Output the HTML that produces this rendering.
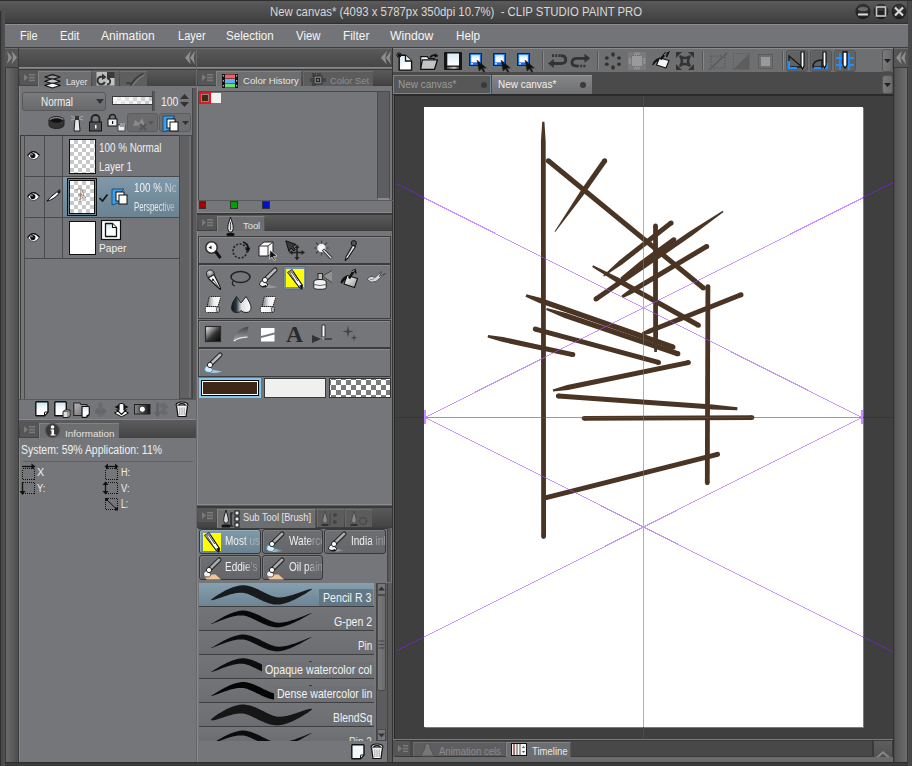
<!DOCTYPE html>
<html><head><meta charset="utf-8"><style>
*{margin:0;padding:0;box-sizing:border-box}
html,body{width:912px;height:766px;overflow:hidden;background:#353535;font-family:"Liberation Sans",sans-serif;position:relative}
.a{position:absolute}
.t{white-space:nowrap;line-height:1;transform-origin:0 0}
svg{position:absolute;overflow:visible}
.tx{overflow:visible}
</style></head><body>
<div class="a" style="left:0px;top:0px;width:912px;height:24px;background:linear-gradient(#5a5a5a,#3e3e3e);border-top:1px solid #2e2e2e;border-bottom:1px solid #2e2e2e"></div>
<svg class="tx" style="left:264.60px;top:2.20px" width="392.2" height="19.1"><text x="5" y="14.30" font-family="Liberation Sans" font-weight="normal" font-size="11.92" fill="#d8d8d8" textLength="372.18" lengthAdjust="spacingAndGlyphs" style="white-space:pre;">New canvas* (4093 x 5787px 350dpi 10.7%) &nbsp;- CLIP STUDIO PAINT PRO</text></svg>
<svg style="left:854.5px;top:3px;" width="16" height="17" viewBox="0 0 16 17"><defs><radialGradient id="wg" cx="50%" cy="30%" r="70%"><stop offset="0" stop-color="#3c3c3c"/><stop offset="1" stop-color="#1a1a1a"/></radialGradient></defs><ellipse cx="8" cy="8.5" rx="7.5" ry="7.8" fill="url(#wg)"/><ellipse cx="8" cy="6" rx="5" ry="2" fill="#6a6a6a"/><rect x="3" y="10.5" width="10" height="2" fill="#e0e0e0"/></svg>
<svg style="left:872.5px;top:3px;" width="16" height="17" viewBox="0 0 16 17"><defs><radialGradient id="wg" cx="50%" cy="30%" r="70%"><stop offset="0" stop-color="#3c3c3c"/><stop offset="1" stop-color="#1a1a1a"/></radialGradient></defs><ellipse cx="8" cy="8.5" rx="7.5" ry="7.8" fill="url(#wg)"/><rect x="3.5" y="4" width="9" height="9" fill="none" stroke="#c8c8c8" stroke-width="1.6"/><rect x="5" y="8" width="6" height="3" fill="#222"/></svg>
<svg style="left:890.5px;top:3px;" width="16" height="17" viewBox="0 0 16 17"><defs><radialGradient id="wg" cx="50%" cy="30%" r="70%"><stop offset="0" stop-color="#3c3c3c"/><stop offset="1" stop-color="#1a1a1a"/></radialGradient></defs><ellipse cx="8" cy="8.5" rx="7.5" ry="7.8" fill="url(#wg)"/><path d="M4 4.5L12 12.5M12 4.5L4 12.5" stroke="#d8d8d8" stroke-width="2.2"/></svg>
<div class="a" style="left:0px;top:11px;width:5px;height:755px;background:linear-gradient(90deg,#303030 0,#303030 1px,#474747 1px,#525252 5px)"></div>
<div class="a" style="left:907px;top:1px;width:5px;height:765px;background:linear-gradient(90deg,#3a3a3a 0,#3a3a3a 1px,#4a4a4a 1px,#464646 5px)"></div>
<div class="a" style="left:5px;top:762px;width:902px;height:4px;background:#3a3a3a;border-top:1px solid #2e2e2e"></div>
<div class="a" style="left:5px;top:24px;width:903px;height:24px;background:#737477;border-top:1px solid #8e8e90;border-bottom:1px solid #3e3e40"></div>
<svg class="tx" style="left:14.60px;top:24.30px" width="37.6" height="20.9"><text x="5" y="15.70" font-family="Liberation Sans" font-weight="normal" font-size="13.08" fill="#f4f4f4" textLength="17.62" lengthAdjust="spacingAndGlyphs" style="white-space:pre;">File</text></svg>
<svg class="tx" style="left:54.60px;top:24.30px" width="39.3" height="20.9"><text x="5" y="15.70" font-family="Liberation Sans" font-weight="normal" font-size="13.08" fill="#f4f4f4" textLength="19.28" lengthAdjust="spacingAndGlyphs" style="white-space:pre;">Edit</text></svg>
<svg class="tx" style="left:95.70px;top:24.30px" width="73.7" height="20.9"><text x="5" y="15.70" font-family="Liberation Sans" font-weight="normal" font-size="13.08" fill="#f4f4f4" textLength="53.72" lengthAdjust="spacingAndGlyphs" style="white-space:pre;">Animation</text></svg>
<svg class="tx" style="left:172.70px;top:24.30px" width="47.6" height="20.9"><text x="5" y="15.70" font-family="Liberation Sans" font-weight="normal" font-size="13.08" fill="#f4f4f4" textLength="27.62" lengthAdjust="spacingAndGlyphs" style="white-space:pre;">Layer</text></svg>
<svg class="tx" style="left:221.00px;top:24.30px" width="67.6" height="20.9"><text x="5" y="15.70" font-family="Liberation Sans" font-weight="normal" font-size="13.08" fill="#f4f4f4" textLength="47.59" lengthAdjust="spacingAndGlyphs" style="white-space:pre;">Selection</text></svg>
<svg class="tx" style="left:291.00px;top:24.30px" width="44.5" height="20.9"><text x="5" y="15.70" font-family="Liberation Sans" font-weight="normal" font-size="13.08" fill="#f4f4f4" textLength="24.49" lengthAdjust="spacingAndGlyphs" style="white-space:pre;">View</text></svg>
<svg class="tx" style="left:338.10px;top:24.30px" width="46.3" height="20.9"><text x="5" y="15.70" font-family="Liberation Sans" font-weight="normal" font-size="13.08" fill="#f4f4f4" textLength="26.33" lengthAdjust="spacingAndGlyphs" style="white-space:pre;">Filter</text></svg>
<svg class="tx" style="left:385.30px;top:24.30px" width="63.4" height="20.9"><text x="5" y="15.70" font-family="Liberation Sans" font-weight="normal" font-size="13.08" fill="#f4f4f4" textLength="43.36" lengthAdjust="spacingAndGlyphs" style="white-space:pre;">Window</text></svg>
<svg class="tx" style="left:450.60px;top:24.30px" width="44.1" height="20.9"><text x="5" y="15.70" font-family="Liberation Sans" font-weight="normal" font-size="13.08" fill="#f4f4f4" textLength="24.12" lengthAdjust="spacingAndGlyphs" style="white-space:pre;">Help</text></svg>
<div class="a" style="left:5px;top:48px;width:13px;height:714px;background:linear-gradient(90deg,#6a6a6a 0,#5c5c5c 50%,#4e4e4e 100%);border-left:1px solid #3a3a3a"></div>
<div class="a" style="left:5px;top:48px;width:13px;height:20px;background:#555556;border-top:1px solid #6e6e6e;border-bottom:1px solid #3a3a3a"></div>
<svg style="left:7px;top:51px;" width="11" height="14" viewBox="0 0 11 14"><path d="M0 0L5 6.5L0 13L1.4 6.5Z M4.7 0L10 6.5L4.7 13L6 6.5Z" fill="#8e8e8e"/></svg>
<div class="a" style="left:18px;top:48px;width:179px;height:714px;background:#75767a"></div>
<div class="a" style="left:197px;top:48px;width:196px;height:714px;background:#75767a"></div>
<div class="a" style="left:18px;top:48px;width:1px;height:714px;background:#3a3a3a"></div>
<div class="a" style="left:19px;top:69px;width:1px;height:693px;background:#88898c"></div>
<div class="a" style="left:196px;top:48px;width:1px;height:714px;background:#66676a"></div>
<div class="a" style="left:197px;top:48px;width:1px;height:714px;background:#88898c"></div>
<div class="a" style="left:392px;top:48px;width:1px;height:714px;background:#333"></div>
<div class="a" style="left:19px;top:48px;width:177px;height:19px;background:linear-gradient(#5a5a5b,#464647);border-top:1px solid #6c6c6c"></div>
<div class="a" style="left:19px;top:67px;width:177px;height:2px;background:#7a7a7c;border-top:1px solid #8a8a8c"></div>
<svg style="left:185px;top:51px;" width="11" height="14" viewBox="0 0 11 14"><path d="M10 0L5 6.8L10 13.6L8.7 6.8Z M5.7 0L0 6.8L5.7 13.6L4.4 6.8Z" fill="#8e8e8e"/></svg>
<div class="a" style="left:197px;top:48px;width:195px;height:19px;background:linear-gradient(#5a5a5b,#464647);border-top:1px solid #6c6c6c"></div>
<div class="a" style="left:197px;top:67px;width:195px;height:2px;background:#7a7a7c;border-top:1px solid #8a8a8c"></div>
<svg style="left:381px;top:51px;" width="11" height="14" viewBox="0 0 11 14"><path d="M10 0L5 6.8L10 13.6L8.7 6.8Z M5.7 0L0 6.8L5.7 13.6L4.4 6.8Z" fill="#8e8e8e"/></svg>
<div class="a" style="left:19px;top:69px;width:177px;height:17px;background:linear-gradient(#5a5a5b,#434344);border-top:1px solid #3a3a3a"></div>
<div class="a" style="left:20px;top:70px;width:18px;height:15px;background:#565657"><svg width="18" height="15" style="left:0;top:0"><path d="M4 4L8 7.5L4 11Z" fill="#7a7a7a"/><rect x="9" y="4" width="6" height="1.6" fill="#7a7a7a"/><rect x="9" y="6.8" width="6" height="1.6" fill="#7a7a7a"/><rect x="9" y="9.6" width="6" height="1.6" fill="#7a7a7a"/></svg></div>
<div class="a" style="left:38px;top:71px;width:53px;height:15px;background:#6d6e70;border-top:1px solid #838385;border-left:1px solid #838385"></div>
<svg style="left:44px;top:74px;" width="17" height="15" viewBox="0 0 17 15"><g stroke="#111" stroke-width="1.1" stroke-linejoin="round"><path d="M0.8 3L8.5 0.6L16.2 3L8.5 5.6Z" fill="#9a9a9a"/><path d="M0.8 7.2L8.5 4.8L16.2 7.2L8.5 9.8Z" fill="#c8c8c8"/><path d="M0.8 11.4L8.5 9L16.2 11.4L8.5 14Z" fill="#fafafa"/></g></svg>
<svg class="tx" style="left:60.60px;top:72.59px" width="41.4" height="15.3"><text x="5" y="11.51" font-family="Liberation Sans" font-weight="normal" font-size="9.59" fill="#e4e4e4" textLength="21.41" lengthAdjust="spacingAndGlyphs" style="white-space:pre;">Layer</text></svg>
<div class="a" style="left:92px;top:71px;width:27px;height:15px;background:#5e5e5f;border-top:1px solid #707070"></div>
<svg style="left:96px;top:72px;" width="19" height="14" viewBox="0 0 19 14"><rect x="0.5" y="0" width="10.5" height="13.5" fill="#bdbdbd"/><rect x="11" y="0" width="7.5" height="6" fill="#3a3a3a"/><rect x="11" y="6" width="7.5" height="7.5" fill="#c4c4c4"/><path d="M8.5 6.5A3.8 3.8 0 1 0 8.8 10" fill="none" stroke="#333" stroke-width="2"/><path d="M6 1.5L10.5 5L6 8Z" fill="#333"/><path d="M11 12.5A3 3 0 1 0 11.5 6.5" fill="none" stroke="#333" stroke-width="1.8"/><path d="M10.5 6L14 3.5V9Z" fill="#333"/></svg>
<div class="a" style="left:120px;top:71px;width:27px;height:15px;background:#5e5e5f;border-top:1px solid #707070"></div>
<svg style="left:126px;top:73px;" width="19" height="13" viewBox="0 0 19 13"><path d="M0.5 10.5Q3 9 5 11.5Q10 3.5 17.5 0.5" stroke="#3a3a3a" stroke-width="1.8" fill="none"/><path d="M6.5 12.5Q11.5 5 18.5 1.5" stroke="#8a8a8a" stroke-width="1" fill="none"/></svg>
<div class="a" style="left:22px;top:92px;width:84px;height:19px;background:linear-gradient(#7b7c7e,#68696b);border:1px solid #58585a;border-radius:3px"></div>
<svg class="tx" style="left:36.30px;top:90.57px" width="52.0" height="19.8"><text x="5" y="14.83" font-family="Liberation Sans" font-weight="normal" font-size="12.35" fill="#f0f0f0" textLength="31.98" lengthAdjust="spacingAndGlyphs" style="white-space:pre;">Normal</text></svg>
<svg style="left:96px;top:99px;" width="8" height="5" viewBox="0 0 8 5"><path d="M0 0H8L4 5Z" fill="#333"/></svg>
<div class="a" style="left:112px;top:96px;width:41px;height:9px;background:linear-gradient(90deg,rgba(255,255,255,.7),rgba(255,255,255,0)),repeating-conic-gradient(#c4c4c4 0 25%,#f0f0f0 0 50%) 0 0/8px 8px;border:1px solid #3a3a3a"></div>
<div class="a" style="left:152px;top:91px;width:3px;height:20px;background:#5a5a5b;border-left:1px solid #484848"></div>
<svg class="tx" style="left:155.50px;top:90.57px" width="37.4" height="19.8"><text x="5" y="14.83" font-family="Liberation Sans" font-weight="normal" font-size="12.35" fill="#f0f0f0" textLength="17.38" lengthAdjust="spacingAndGlyphs" style="white-space:pre;">100</text></svg>
<svg style="left:180px;top:94px;" width="9" height="14" viewBox="0 0 9 14"><path d="M0 5L4.5 0L9 5Z M0 8H9L4.5 13Z" fill="#333"/></svg>
<svg style="left:48px;top:115px;" width="17" height="16" viewBox="0 0 17 16"><ellipse cx="8.5" cy="5" rx="7.5" ry="3.5" fill="#888" stroke="#222"/><path d="M1 5V10A7.5 3.5 0 0 0 16 10V5" fill="#333" stroke="#222"/><ellipse cx="8.5" cy="5.5" rx="6" ry="2.2" fill="#111"/></svg>
<svg style="left:70px;top:114px;" width="14" height="18" viewBox="0 0 14 18"><path d="M5 5H9L10 17H4Z" fill="#e8e8e8" stroke="#222"/><rect x="5" y="2" width="4" height="4" fill="#333"/><path d="M1 2L5 4M13 2L9 4M1 6L5 5M13 6L9 5" stroke="#aaa"/></svg>
<svg style="left:88px;top:114px;" width="15" height="18" viewBox="0 0 15 18"><path d="M3.5 8V5A4 4 0 0 1 11.5 5V8" fill="none" stroke="#222" stroke-width="1.8"/><rect x="1.5" y="8" width="12" height="9" fill="#555" stroke="#111"/><rect x="7" y="11" width="1.5" height="3.5" fill="#fff"/></svg>
<svg style="left:107px;top:114px;" width="19" height="18" viewBox="0 0 19 18"><path d="M2.5 5V3.5A3 3 0 0 1 8.5 3.5V5" fill="none" stroke="#222" stroke-width="1.5"/><rect x="1" y="5" width="9" height="7" fill="#eee" stroke="#111"/><rect x="5" y="7" width="1.2" height="3" fill="#111"/><rect x="11" y="11" width="7" height="6" fill="#eee" stroke="#444"/><rect x="13" y="9" width="5" height="4" fill="#999"/></svg>
<div class="a" style="left:127px;top:113px;width:31px;height:19px;background:#6a6a6c;border:1px solid #5c5c5e;border-radius:3px"></div>
<svg style="left:131px;top:116px;" width="24" height="14" viewBox="0 0 24 14"><path d="M2 10L4 4L8 7L11 2L14 9Z" fill="#8a8a8a"/><path d="M9 8L15 14M15 8L9 14" stroke="#555" stroke-width="2"/><path d="M17 5H23L20 9Z" fill="#555"/></svg>
<div class="a" style="left:159px;top:113px;width:32px;height:19px;background:#6e6f71;border:1px solid #5c5c5e;border-radius:3px"></div>
<svg style="left:162px;top:115px;" width="28" height="17" viewBox="0 0 28 17"><path d="M1 1H13L10 4V14L1 17Z" fill="#3aa0f0" stroke="#1a3a5a" stroke-width=".8"/><rect x="5" y="4" width="8" height="9" fill="#fff" stroke="#111"/><rect x="8" y="7" width="8" height="9" fill="#fff" stroke="#111"/><path d="M20 6H27L23.5 10Z" fill="#333"/></svg>
<div class="a" style="left:20px;top:135px;width:159px;height:264px;background:#75767a;border-top:1px solid #3a3a3a;border-left:1px solid #3a3a3a"></div>
<div class="a" style="left:179px;top:135px;width:13px;height:264px;background:#616164;border:1px solid #4a4a4c;box-shadow:inset -2px 0 0 #6e6e70"></div>
<div class="a" style="left:192px;top:88px;width:4px;height:331px;background:#5a5a5b;border-left:1px solid #454546"></div>
<div class="a" style="left:24px;top:135px;width:1px;height:264px;background:#4a4a4c"></div>
<div class="a" style="left:25px;top:176px;width:154px;height:1px;background:#4a4a4c"></div>
<div class="a" style="left:44px;top:136px;width:1px;height:40px;background:#4a4a4c"></div>
<div class="a" style="left:62px;top:136px;width:1px;height:40px;background:#4a4a4c"></div>
<svg style="left:27px;top:151px;" width="13" height="10" viewBox="0 0 13 10"><path d="M0.5 4.8Q6 -3.5 12.5 4.3Q7 12.8 0.5 4.8Z" fill="#fcfcfc" stroke="#333" stroke-width=".9"/><path d="M0.6 4.6Q6 -3.2 12.4 4.2" fill="none" stroke="#111" stroke-width="1.4"/><circle cx="5.8" cy="4.6" r="2.6" fill="#111"/><circle cx="5" cy="3.6" r=".8" fill="#aaa"/></svg>
<div class="a" style="left:25px;top:217px;width:154px;height:1px;background:#4a4a4c"></div>
<div class="a" style="left:44px;top:177px;width:1px;height:40px;background:#4a4a4c"></div>
<div class="a" style="left:62px;top:177px;width:1px;height:40px;background:#4a4a4c"></div>
<svg style="left:27px;top:192px;" width="13" height="10" viewBox="0 0 13 10"><path d="M0.5 4.8Q6 -3.5 12.5 4.3Q7 12.8 0.5 4.8Z" fill="#fcfcfc" stroke="#333" stroke-width=".9"/><path d="M0.6 4.6Q6 -3.2 12.4 4.2" fill="none" stroke="#111" stroke-width="1.4"/><circle cx="5.8" cy="4.6" r="2.6" fill="#111"/><circle cx="5" cy="3.6" r=".8" fill="#aaa"/></svg>
<div class="a" style="left:25px;top:258px;width:154px;height:1px;background:#4a4a4c"></div>
<div class="a" style="left:44px;top:218px;width:1px;height:40px;background:#4a4a4c"></div>
<div class="a" style="left:62px;top:218px;width:1px;height:40px;background:#4a4a4c"></div>
<svg style="left:27px;top:233px;" width="13" height="10" viewBox="0 0 13 10"><path d="M0.5 4.8Q6 -3.5 12.5 4.3Q7 12.8 0.5 4.8Z" fill="#fcfcfc" stroke="#333" stroke-width=".9"/><path d="M0.6 4.6Q6 -3.2 12.4 4.2" fill="none" stroke="#111" stroke-width="1.4"/><circle cx="5.8" cy="4.6" r="2.6" fill="#111"/><circle cx="5" cy="3.6" r=".8" fill="#aaa"/></svg>
<div class="a" style="left:63px;top:177px;width:116px;height:40px;background:linear-gradient(#7f99aa,#6a8291)"></div>
<div class="a" style="left:69px;top:139px;width:27px;height:35px;background:repeating-conic-gradient(#c8c8c8 0 25%,#fff 0 50%) 0 0/8px 8px;border:1.5px solid #111"></div>
<svg class="tx" style="left:93.70px;top:136.48px" width="82.5" height="20.7"><text x="5" y="15.52" font-family="Liberation Sans" font-weight="normal" font-size="12.94" fill="#f0f0f0" textLength="62.51" lengthAdjust="spacingAndGlyphs" style="white-space:pre;">100 % Normal</text></svg>
<svg class="tx" style="left:93.70px;top:155.10px" width="53.1" height="20.9"><text x="5" y="15.70" font-family="Liberation Sans" font-weight="normal" font-size="13.08" fill="#f0f0f0" textLength="33.11" lengthAdjust="spacingAndGlyphs" style="white-space:pre;">Layer 1</text></svg>
<div class="a" style="left:67px;top:178px;width:30px;height:38px;border:1px solid #111;background:#6a8291"></div>
<div class="a" style="left:69px;top:180px;width:26px;height:34px;background:repeating-conic-gradient(#c8c8c8 0 25%,#fff 0 50%) 0 0/8px 8px;border:1px solid #111"></div>
<svg style="left:73px;top:186px;" width="18" height="20" viewBox="0 0 18 20"><path d="M3 4Q8 1 10 6T6 14M5 9Q11 8 13 12M8 3L7 16" stroke="#8a6a5a" stroke-width="1" fill="none" opacity=".7"/></svg>
<svg style="left:46px;top:189px;" width="15" height="13" viewBox="0 0 15 13"><path d="M0.8 12.2Q4 8 10.5 3.2L12.3 1.5L13.8 0.8L14 3L12.8 4.5Q9 10 0.8 12.2Z" fill="#f8f8f8" stroke="#111" stroke-width="1" stroke-linejoin="round"/><path d="M11 3.5L13.2 1.2L14.2 3.2L12.5 4.6Z" fill="#111"/></svg>
<svg style="left:99px;top:194px;" width="9" height="8" viewBox="0 0 9 8"><path d="M0.5 4L3.5 7L8.5 0.5" stroke="#111" stroke-width="1.6" fill="none"/></svg>
<svg style="left:111px;top:188px;" width="18" height="18" viewBox="0 0 18 18"><path d="M1 1H13L10 4V14L1 17Z" fill="#3aa0f0" stroke="#1a3a5a" stroke-width=".8"/><rect x="5" y="4" width="8" height="9" fill="#fff" stroke="#111"/><rect x="8" y="7" width="8" height="9" fill="#fff" stroke="#111"/></svg>
<div class="a" style="left:0;top:0;width:912px;height:766px;clip-path:inset(178px 736px 549px 130px);-webkit-mask-image:linear-gradient(90deg,#000 0,#000 158px,rgba(0,0,0,.4) 176px)"><svg class="tx" style="left:128.80px;top:176.03px" width="82.5" height="21.2"><text x="5" y="15.87" font-family="Liberation Sans" font-weight="normal" font-size="13.23" fill="#f0f0f0" textLength="62.51" lengthAdjust="spacingAndGlyphs" style="white-space:pre;">100 % Normal</text></svg><svg class="tx" style="left:128.80px;top:196.33px" width="60.7" height="20.2"><text x="5" y="15.17" font-family="Liberation Sans" font-weight="normal" font-size="12.65" fill="#e6ecf0" textLength="40.70" lengthAdjust="spacingAndGlyphs" style="white-space:pre;">Perspective</text></svg></div>
<div class="a" style="left:69px;top:221px;width:27px;height:34px;background:#fff;border:1.5px solid #111"></div>
<svg style="left:101px;top:220px;" width="20" height="20" viewBox="0 0 20 20"><rect x="0.5" y="0.5" width="19" height="19" fill="#fff" stroke="#111" stroke-width="1.2"/><path d="M4.5 3.5H11.5L15.5 7.5V16.5H4.5Z" fill="url(#lpg)" stroke="#111" stroke-width="1.3" stroke-linejoin="round"/><path d="M11.5 3.5V7.5H15.5" fill="#eee" stroke="#111" stroke-width="1.1"/></svg>
<svg class="tx" style="left:93.50px;top:238.45px" width="47.5" height="18.6"><text x="5" y="13.95" font-family="Liberation Sans" font-weight="normal" font-size="11.63" fill="#f0f0f0" textLength="27.49" lengthAdjust="spacingAndGlyphs" style="white-space:pre;">Paper</text></svg>
<div class="a" style="left:19px;top:399px;width:177px;height:20px;background:#75767a;border-top:1px solid #5a5a5c"></div>
<svg style="left:0px;top:0px;" width="1" height="1" viewBox="0 0 1 1"><defs><linearGradient id="lpg" x1="0" y1="0" x2="0" y2="1"><stop offset="0" stop-color="#c8e4f0"/><stop offset=".55" stop-color="#fff"/></linearGradient></defs></svg>
<svg style="left:35px;top:401px;" width="17" height="17" viewBox="0 0 17 17"><path d="M1 0.8H12.2Q13 0.8 13 1.6V11L9.5 14.8H1.6Q0.8 14.8 0.8 14V1.6Q0.8 0.8 1.6 0.8Z" fill="url(#lpg)" stroke="#111" stroke-width="1.4"/><path d="M13 11L9.5 14.8V11.5Q9.5 11 10 11Z" fill="#eee" stroke="#111" stroke-width="1"/></svg>
<svg style="left:54px;top:401px;" width="17" height="17" viewBox="0 0 17 17"><path d="M1 0.8H11.5Q12.3 0.8 12.3 1.6V14.8H1.6Q0.8 14.8 0.8 14V1.6Q0.8 0.8 1.6 0.8Z" fill="url(#lpg)" stroke="#111" stroke-width="1.4"/><path d="M9 10.5L11 9H16V15L14 16.5H9Z" fill="#ddd" stroke="#111" stroke-width=".9"/><path d="M9 10.5H14V16.5M14 10.5L16 9" fill="none" stroke="#333" stroke-width=".7"/></svg>
<svg style="left:73px;top:402px;" width="17" height="17" viewBox="0 0 17 17"><defs><linearGradient id="fg1" x1="0" y1="0" x2="1" y2="1"><stop offset="0" stop-color="#bbb"/><stop offset="1" stop-color="#666"/></linearGradient></defs><path d="M0.8 1H7L8 2.5H14V13.5H0.8Z" fill="url(#fg1)" stroke="#222" stroke-width="1.1"/><path d="M9 4.5H15.5Q16.3 4.5 16.3 5.3V12.5L13.5 15.3H9.8Q9 15.3 9 14.5Z" fill="url(#lpg)" stroke="#111" stroke-width="1.2"/><path d="M16.3 12.5L13.5 15.3V13Z" fill="#111"/></svg>
<svg style="left:94px;top:402px;" width="17" height="17" viewBox="0 0 17 17"><g opacity=".35"><path d="M0 9L6.5 5L13 9L6.5 13Z" fill="#444"/><path d="M4.5 0.5H8.5V6H11L6.5 10.5L2 6H4.5Z" fill="#555"/><path d="M0 11L6.5 15L13 11" fill="#555"/></g></svg>
<svg style="left:114px;top:403px;" width="17" height="17" viewBox="0 0 17 17"><path d="M0.5 4L7.5 0.5L14.5 4L7.5 7.5Z" fill="#111"/><path d="M0.5 10L7.5 6.5L14.5 10L7.5 13.8Z" fill="#fff" stroke="#111" stroke-width="1"/><path d="M5 1.8Q5 0.5 7.5 0.5Q10 0.5 10 1.8V7H12L7.5 11.5L3 7H5Z" fill="#fff" stroke="#111" stroke-width="1.2"/></svg>
<svg style="left:134px;top:404px;" width="17" height="17" viewBox="0 0 17 17"><defs><linearGradient id="mg1" x1="0" y1="0" x2="1" y2="0"><stop offset="0" stop-color="#8a8a8a"/><stop offset="1" stop-color="#111"/></linearGradient></defs><rect x="0.5" y="0.5" width="15.5" height="9.5" fill="url(#mg1)" stroke="#222"/><circle cx="8.3" cy="5.2" r="3.1" fill="#fff" stroke="#111" stroke-width=".8"/></svg>
<svg style="left:153px;top:402px;" width="17" height="17" viewBox="0 0 17 17"><g opacity=".35"><path d="M3 0.5H6V10H8.5L4.5 15.5L0.5 10H3Z" fill="#444"/><path d="M5 3L11 0.5L16 5.5L10 8Z" fill="#555"/><path d="M6 9L11 7L16 11L10 13.5Z" fill="#555"/></g></svg>
<svg style="left:175px;top:401px;" width="17" height="17" viewBox="0 0 17 17"><path d="M1.5 4.5H12.5L11 15.5H3Z" fill="#f4f4f4" stroke="#111" stroke-width="1.2"/><path d="M1 4.5Q1 1 7 1Q13 1 13 4.5" fill="#ddd" stroke="#111" stroke-width="1.2"/><path d="M3.5 4Q7 1.5 10.5 4" fill="none" stroke="#111" stroke-width="1.3"/><path d="M4.8 6.5V14M7 6.5V14M9.2 6.5V14" stroke="#999" stroke-width=".9"/></svg>
<div class="a" style="left:19px;top:419px;width:177px;height:3px;background:#5a5a5c;border-top:1px solid #8a8a8c"></div>
<div class="a" style="left:19px;top:422px;width:177px;height:16px;background:linear-gradient(#5a5a5b,#434344)"></div>
<div class="a" style="left:20px;top:422px;width:18px;height:15px;background:#565657"><svg width="18" height="15" style="left:0;top:0"><path d="M4 4L8 7.5L4 11Z" fill="#7a7a7a"/><rect x="9" y="4" width="6" height="1.6" fill="#7a7a7a"/><rect x="9" y="6.8" width="6" height="1.6" fill="#7a7a7a"/><rect x="9" y="9.6" width="6" height="1.6" fill="#7a7a7a"/></svg></div>
<div class="a" style="left:39px;top:423px;width:80px;height:15px;background:#6d6e70;border-top:1px solid #838385;border-left:1px solid #838385"></div>
<svg style="left:45px;top:423px;" width="15" height="15" viewBox="0 0 15 15"><circle cx="7.5" cy="7.5" r="7" fill="#3a3a3a" stroke="#555"/><circle cx="7.5" cy="4" r="1.8" fill="#fff"/><path d="M5.5 6.5H9V11.5H10.5V12.5H5.5V11.5H6.5V7.5H5.5Z" fill="#fff"/></svg>
<svg class="tx" style="left:60.00px;top:424.69px" width="69.5" height="15.3"><text x="5" y="11.51" font-family="Liberation Sans" font-weight="normal" font-size="9.59" fill="#e4e4e4" textLength="49.48" lengthAdjust="spacingAndGlyphs" style="white-space:pre;">Information</text></svg>
<svg class="tx" style="left:15.50px;top:439.03px" width="161.0" height="20.2"><text x="5" y="15.17" font-family="Liberation Sans" font-weight="normal" font-size="12.65" fill="#f0f0f0" textLength="140.99" lengthAdjust="spacingAndGlyphs" style="white-space:pre;">System: 59% Application: 11%</text></svg>
<div class="a" style="left:23px;top:461px;width:170px;height:1px;background:#606062"></div>
<svg style="left:0;top:0" width="912" height="766"><rect x="22.5" y="468.5" width="12" height="11" fill="none" stroke="#111" stroke-dasharray="1 1" shape-rendering="crispEdges"/><path d="M22 466.5H33" stroke="#111" stroke-width="1.3"/><path d="M31.5 463.5L35.5 466.5L31.5 469.5Z" fill="#111"/></svg>
<svg class="tx" style="left:31.80px;top:462.05px" width="27.2" height="18.6"><text x="5" y="13.95" font-family="Liberation Sans" font-weight="normal" font-size="11.63" fill="#f0f0f0" textLength="7.22" lengthAdjust="spacingAndGlyphs" style="white-space:pre;">X</text></svg>
<svg style="left:0;top:0" width="912" height="766"><rect x="22.5" y="482.5" width="12" height="11" fill="none" stroke="#111" stroke-dasharray="1 1" shape-rendering="crispEdges"/><path d="M22.5 482V492" stroke="#111" stroke-width="1.3"/><path d="M19.5 491L22.5 495L25.5 491Z" fill="#111"/></svg>
<svg class="tx" style="left:31.80px;top:478.05px" width="28.2" height="18.6"><text x="5" y="13.95" font-family="Liberation Sans" font-weight="normal" font-size="11.63" fill="#f0f0f0" textLength="8.20" lengthAdjust="spacingAndGlyphs" style="white-space:pre;">Y:</text></svg>
<svg style="left:0;top:0" width="912" height="766"><rect x="105.5" y="468.5" width="12" height="11" fill="none" stroke="#111" stroke-dasharray="1 1" shape-rendering="crispEdges"/><path d="M107 466.5H116" stroke="#111" stroke-width="1.3"/><path d="M108 463.5L104.5 466.5L108 469.5ZM115 463.5L118.5 466.5L115 469.5Z" fill="#111"/></svg>
<svg class="tx" style="left:115.50px;top:462.05px" width="29.0" height="18.6"><text x="5" y="13.95" font-family="Liberation Sans" font-weight="normal" font-size="11.63" fill="#f0f0f0" textLength="9.00" lengthAdjust="spacingAndGlyphs" style="white-space:pre;">H:</text></svg>
<svg style="left:0;top:0" width="912" height="766"><rect x="105.5" y="482.5" width="12" height="11" fill="none" stroke="#111" stroke-dasharray="1 1" shape-rendering="crispEdges"/><path d="M105.5 484V492" stroke="#111" stroke-width="1.3"/><path d="M102.5 485L105.5 481.5L108.5 485ZM102.5 491L105.5 494.5L108.5 491Z" fill="#111"/></svg>
<svg class="tx" style="left:115.50px;top:478.05px" width="28.5" height="18.6"><text x="5" y="13.95" font-family="Liberation Sans" font-weight="normal" font-size="11.63" fill="#f0f0f0" textLength="8.48" lengthAdjust="spacingAndGlyphs" style="white-space:pre;">V:</text></svg>
<svg style="left:0;top:0" width="912" height="766"><rect x="105.5" y="498.5" width="12" height="11" fill="none" stroke="#111" stroke-dasharray="1 1" shape-rendering="crispEdges"/><path d="M106.5 499.5L116.5 509" stroke="#111" stroke-width="1"/><rect x="105" y="498" width="3" height="3" fill="#111"/><rect x="115" y="507.5" width="3" height="3" fill="#111"/></svg>
<svg class="tx" style="left:115.50px;top:493.70px" width="27.0" height="19.1"><text x="5" y="14.30" font-family="Liberation Sans" font-weight="normal" font-size="11.92" fill="#f0f0f0" textLength="6.99" lengthAdjust="spacingAndGlyphs" style="white-space:pre;">L:</text></svg>
<div class="a" style="left:197px;top:69px;width:195px;height:17px;background:linear-gradient(#5a5a5b,#434344);border-top:1px solid #3a3a3a;border-bottom:1px solid #3f3f40"></div>
<div class="a" style="left:198px;top:70px;width:18px;height:15px;background:#565657"><svg width="18" height="15" style="left:0;top:0"><path d="M4 4L8 7.5L4 11Z" fill="#7a7a7a"/><rect x="9" y="4" width="6" height="1.6" fill="#7a7a7a"/><rect x="9" y="6.8" width="6" height="1.6" fill="#7a7a7a"/><rect x="9" y="9.6" width="6" height="1.6" fill="#7a7a7a"/></svg></div>
<div class="a" style="left:216px;top:71px;width:86px;height:15px;background:#6d6e70;border-top:1px solid #838385;border-left:1px solid #838385;border-right:1px solid #555"></div>
<svg style="left:222px;top:74px;" width="16" height="14" viewBox="0 0 16 14"><rect x="0" y="0" width="16" height="14" fill="#111"/><rect x="3" y="0.5" width="10" height="4" fill="#f06060"/><rect x="3" y="5" width="10" height="4" fill="#60b0ff"/><rect x="3" y="9.5" width="10" height="4" fill="#70e070"/><g fill="#ddd"><rect x="0.8" y="1.2" width="1.2" height="1.2"/><rect x="0.8" y="6.2" width="1.2" height="1.2"/><rect x="0.8" y="11.2" width="1.2" height="1.2"/><rect x="14" y="1.2" width="1.2" height="1.2"/><rect x="14" y="6.2" width="1.2" height="1.2"/><rect x="14" y="11.2" width="1.2" height="1.2"/></g></svg>
<svg class="tx" style="left:238.10px;top:72.11px" width="75.8" height="15.6"><text x="5" y="11.69" font-family="Liberation Sans" font-weight="normal" font-size="9.74" fill="#e4e4e4" textLength="55.79" lengthAdjust="spacingAndGlyphs" style="white-space:pre;">Color History</text></svg>
<div class="a" style="left:303px;top:71px;width:70px;height:15px;background:#5c5c5d;border-top:1px solid #707072;border-left:1px solid #6a6a6a"></div>
<svg style="left:310px;top:73px;" width="16" height="13" viewBox="0 0 16 13"><g fill="#444"><rect x="2" y="0" width="4" height="4"/><rect x="7" y="0" width="4" height="4"/><rect x="0" y="5" width="4" height="4"/><rect x="12" y="5" width="4" height="4"/><rect x="2" y="9" width="4" height="4"/></g><rect x="4" y="3" width="8" height="8" fill="#777" stroke="#333"/><rect x="6.5" y="5.5" width="3" height="3" fill="none" stroke="#222"/></svg>
<svg class="tx" style="left:324.90px;top:72.11px" width="59.1" height="15.6"><text x="5" y="11.69" font-family="Liberation Sans" font-weight="normal" font-size="9.74" fill="#8e8e90" textLength="39.09" lengthAdjust="spacingAndGlyphs" style="white-space:pre;">Color Set</text></svg>
<div class="a" style="left:198px;top:91px;width:180px;height:109px;background:#75767a;border-top:1px solid #4a4a4c;border-left:1px solid #4a4a4c"></div>
<div class="a" style="left:377px;top:91px;width:13px;height:109px;background:#5e5e60;border:1px solid #4a4a4c;border-bottom:2px solid #8a8a8a"></div>
<div class="a" style="left:199px;top:92px;width:12px;height:12px;border:2px solid #e8141e;background:#f0f0f0"></div>
<div class="a" style="left:202px;top:95px;width:6px;height:6px;background:#3d2a1a;box-shadow:0 0 0 1px #888"></div>
<div class="a" style="left:211px;top:93px;width:10px;height:10px;background:#f2f2f0"></div>
<div class="a" style="left:198px;top:200px;width:195px;height:1px;background:#5a5a5c"></div>
<div class="a" style="left:199px;top:201px;width:7px;height:8px;background:#a00000;border:1px solid #333"></div>
<div class="a" style="left:230px;top:201px;width:8px;height:8px;background:#00a000;border:1px solid #333"></div>
<div class="a" style="left:262px;top:201px;width:8px;height:8px;background:#0010d0;border:1px solid #333"></div>
<div class="a" style="left:197px;top:212px;width:195px;height:2px;background:#8a8a8c;border-bottom:1px solid #3a3a3a"></div>
<div class="a" style="left:197px;top:214px;width:195px;height:17px;background:linear-gradient(#5a5a5b,#434344);border-top:1px solid #3a3a3a;border-bottom:1px solid #3f3f40"></div>
<div class="a" style="left:198px;top:215px;width:18px;height:15px;background:#565657"><svg width="18" height="15" style="left:0;top:0"><path d="M4 4L8 7.5L4 11Z" fill="#7a7a7a"/><rect x="9" y="4" width="6" height="1.6" fill="#7a7a7a"/><rect x="9" y="6.8" width="6" height="1.6" fill="#7a7a7a"/><rect x="9" y="9.6" width="6" height="1.6" fill="#7a7a7a"/></svg></div>
<div class="a" style="left:217px;top:216px;width:48px;height:15px;background:#6d6e70;border-top:1px solid #838385;border-left:1px solid #838385;border-right:1px solid #555"></div>
<svg style="left:226px;top:217px;" width="9" height="19" viewBox="0 0 9 19"><path d="M4.5 0L7 8Q8 12 6 15H3Q1 12 2 8Z" fill="#ddd" stroke="#111" stroke-width=".9"/><path d="M4.5 5V13" stroke="#555"/><rect x="0.5" y="16" width="8" height="3" rx="1.5" fill="#111"/></svg>
<svg class="tx" style="left:238.20px;top:217.24px" width="37.2" height="15.8"><text x="5" y="11.86" font-family="Liberation Sans" font-weight="normal" font-size="9.88" fill="#e4e4e4" textLength="17.20" lengthAdjust="spacingAndGlyphs" style="white-space:pre;">Tool</text></svg>
<div class="a" style="left:198px;top:236px;width:193px;height:28px;border:1px solid #3c3c3e;box-shadow:inset 1px 1px 0 #8a8a8c"></div>
<div class="a" style="left:198px;top:264px;width:193px;height:55px;border:1px solid #3c3c3e;box-shadow:inset 1px 1px 0 #8a8a8c"></div>
<div class="a" style="left:198px;top:320px;width:193px;height:28px;border:1px solid #3c3c3e;box-shadow:inset 1px 1px 0 #8a8a8c"></div>
<div class="a" style="left:198px;top:348px;width:193px;height:29px;border:1px solid #3c3c3e;box-shadow:inset 1px 1px 0 #8a8a8c"></div>
<svg style="left:204px;top:240px;" width="18" height="20" viewBox="0 0 18 20"><circle cx="7.5" cy="7.5" r="6" fill="#fafafa" stroke="#333" stroke-width="2.2"/><circle cx="7.5" cy="7.5" r="7" fill="none" stroke="#888" stroke-width=".8"/><path d="M11.5 11.5L16.5 18" stroke="#111" stroke-width="3"/><path d="M4.5 7.5L7.5 5.8V9.2Z" fill="#111"/></svg>
<svg style="left:231px;top:241px;" width="20" height="19" viewBox="0 0 20 19"><circle cx="9" cy="10" r="7" fill="none" stroke="#222" stroke-width="1.6" stroke-dasharray="2 1.6"/><path d="M12 1Q18 3 17 9" fill="none" stroke="#111" stroke-width="1.8"/><path d="M14 8L17.5 11L19.5 6.5Z" fill="#111"/></svg>
<svg style="left:258px;top:241px;" width="20" height="19" viewBox="0 0 20 19"><path d="M1 5L6 1H15V11L10 15H1Z" fill="#fafafa" stroke="#222"/><path d="M1 5H10V15M10 5L15 1" fill="none" stroke="#333"/><path d="M12 9L19 15L15.5 15.5L17.5 19L16 19.5L14 16L11.5 18Z" fill="#111" stroke="#fff" stroke-width=".6"/></svg>
<svg style="left:285px;top:240px;" width="21" height="21" viewBox="0 0 21 21"><path d="M0.8 0.8L11 4.5L7.5 6.5L10.5 9.5L9 11L6 8L4 11.5Z" fill="#3a3a3a" stroke="#111" stroke-width="1" stroke-linejoin="round"/><path d="M12 6.5V18.5M6 12.5H18" stroke="#222" stroke-width="1.6"/><path d="M12 4.5L9.5 8H14.5ZM12 20.5L9.5 17H14.5ZM20 12.5L16.5 10V15ZM4 12.5L7.5 10V15Z" fill="#222"/></svg>
<svg style="left:313px;top:240px;" width="20" height="20" viewBox="0 0 20 20"><g stroke="#444" stroke-width="1.2"><path d="M8.5 0.5V15.5M1 8H16M3 2.5L14 13.5M14 2.5L3 13.5"/></g><circle cx="8.5" cy="8" r="4.2" fill="#eee"/><circle cx="8.5" cy="8" r="2.2" fill="#fff"/><path d="M10 9.5L18.5 18.5" stroke="#222" stroke-width="3"/><path d="M10.5 10L18.3 18.3" stroke="#e8e8e8" stroke-width="1.3"/></svg>
<svg style="left:344px;top:240px;" width="14" height="21" viewBox="0 0 14 21"><circle cx="9.8" cy="3.2" r="2.6" fill="#555" stroke="#111"/><path d="M8.5 5.5L11.5 6.5L4 18L1.2 20.5L2 16.8Z" fill="#fff" stroke="#111" stroke-width="1.1" stroke-linejoin="round"/><path d="M8.3 7.5L3.3 16" stroke="#777" stroke-width=".9"/></svg>
<svg style="left:205px;top:269px;" width="17" height="21" viewBox="0 0 17 21"><defs><radialGradient id="pc1" cx=".4" cy=".35" r=".7"><stop offset="0" stop-color="#ddd"/><stop offset="1" stop-color="#555"/></radialGradient></defs><path d="M3 9L9 5.5L15 17.5L15.5 20.5L13 18.5Z" fill="#f4f4f4" stroke="#111" stroke-width="1.1" stroke-linejoin="round"/><path d="M7.5 9.5L14 18.5" stroke="#333" stroke-width=".8"/><circle cx="8" cy="11" r="1" fill="#111"/><path d="M1.5 3.5Q3 0.5 6 0.8Q9 1.5 9.5 5L3.5 8.5Q0.5 6.5 1.5 3.5Z" fill="url(#pc1)" stroke="#222" stroke-width=".9"/></svg>
<svg style="left:230px;top:270px;" width="21" height="18" viewBox="0 0 21 18"><ellipse cx="10.5" cy="7" rx="9.5" ry="5.5" fill="none" stroke="#222" stroke-width="1.5"/><path d="M3 11Q1 15 5 16" fill="none" stroke="#222" stroke-width="1.2"/></svg>
<svg style="left:258px;top:268px;" width="22" height="21" viewBox="0 0 22 21"><path d="M6 16L20 19Q12 21 6 19.5Z" fill="#aaa" opacity=".7"/><path d="M4.5 12.5Q1 14 1.5 17Q4 20 8 19Q10 18 9.5 16Z" fill="#f0f0f0" stroke="#111" stroke-width=".9"/><path d="M2 17.5Q5 20 9 18.5L8 17Q5 18.5 2 17.5Z" fill="#111"/><path d="M17.2 1.8L7.8 11" stroke="#1e1e1e" stroke-width="4.6" stroke-linecap="round"/><path d="M17.2 1.8L7.8 11" stroke="#bdbdbd" stroke-width="2.6" stroke-linecap="round"/><circle cx="7" cy="12" r="2.6" fill="#fff" stroke="#222" stroke-width="1"/></svg>
<div class="a" style="left:283px;top:266px;width:23px;height:24px;background:#7b8fa0;border:1px solid #5a6e7e;border-radius:3px"></div>
<div class="a" style="left:286px;top:269px;width:18px;height:18px;background:#ffff00"></div>
<svg style="left:287px;top:269px;" width="16" height="20" viewBox="0 0 16 20"><path d="M0.8 3.5L5 0.8L15.5 16.5L14.8 20L12 18Z" fill="#fff" stroke="#111" stroke-width="1.2" stroke-linejoin="round"/><path d="M2.2 2.8L8.5 12.5M3.8 1.8L10.8 12" stroke="#555" stroke-width="1"/><path d="M0.8 3.5L5 0.8L6.5 3L2.3 5.8Z" fill="#888"/><path d="M12.3 16.5L15.3 15.8L14.8 20Z" fill="#111"/></svg>
<svg style="left:313px;top:270px;" width="20" height="20" viewBox="0 0 20 20"><path d="M9.5 6L19 0.5V12.5Z" fill="#9a9a9a" opacity=".8"/><path d="M9.5 6L19 0.5M9.5 6L19 12.5" stroke="#333" stroke-width=".8"/><rect x="5" y="3.5" width="4.5" height="6" fill="#bbb" stroke="#222" stroke-width=".9"/><path d="M0.8 12Q0.8 9.5 7 9.5Q13.2 9.5 13.2 12V17.5Q13.2 19.3 7 19.3Q0.8 19.3 0.8 17.5Z" fill="#f2f2f2" stroke="#222" stroke-width="1"/><path d="M0.8 14.5Q7 16.5 13.2 14.5" fill="none" stroke="#555" stroke-width=".9"/></svg>
<svg style="left:340px;top:269px;" width="19" height="19" viewBox="0 0 19 19"><defs><linearGradient id="bk1" x1="0" y1="0" x2="1" y2="1"><stop offset="0" stop-color="#fff"/><stop offset="1" stop-color="#999"/></linearGradient></defs><path d="M7 6.5L17.5 9.5L14.5 18.5L4 15Z" fill="url(#bk1)" stroke="#111" stroke-width="1.1" stroke-linejoin="round"/><path d="M7 6.5Q2 8 0.5 13.5Q1 15 2.5 14Q4 11 6.5 10Z" fill="#111"/><path d="M9 9.5L14 1.5" stroke="#111" stroke-width="2.4"/><path d="M12 2.5L15 0.8L16 4.5" fill="none" stroke="#111" stroke-width="1.6"/><path d="M12.3 2.6L14.5 1.4" stroke="#eee" stroke-width=".8"/></svg>
<svg style="left:367px;top:271px;" width="19" height="14" viewBox="0 0 19 14"><path d="M0.5 9Q4 12.5 9 10.5L18.5 2.5L12.5 5.5L14.5 0.5L8 6.5Q5 4.5 2.5 6Q0.5 7 0.5 9Z" fill="#d8d8d8" stroke="#444" stroke-width=".9" stroke-linejoin="round"/><path d="M3 8.5Q6 9.5 8 6.5" fill="none" stroke="#777" stroke-width=".8"/></svg>
<svg style="left:205px;top:296px;" width="17" height="18" viewBox="0 0 17 18"><defs><linearGradient id="er1" x1="0" y1="0" x2="1" y2="0"><stop offset="0" stop-color="#777"/><stop offset=".5" stop-color="#eee"/><stop offset="1" stop-color="#fff"/></linearGradient><linearGradient id="er2" x1="0" y1="0" x2="1" y2="0"><stop offset="0" stop-color="#fff"/><stop offset=".7" stop-color="#f4f4f4"/><stop offset="1" stop-color="#999"/></linearGradient></defs><path d="M4 1.5Q4.5 0.5 5.5 0.5H14.5Q16 0.5 15.5 2L13 10.5H2Z" fill="url(#er1)" stroke="#222" stroke-width="1" stroke-dasharray="1.5 .6"/><path d="M1.5 10.5H13Q14.5 10.5 14.5 13.5Q14.5 16.5 13 16.5H1.5Q0.3 16.5 0.3 13.5Q0.3 10.5 1.5 10.5Z" fill="url(#er2)" stroke="#222" stroke-width="1" stroke-dasharray="1.5 .6"/><path d="M13 10.5Q11.5 10.5 11.5 13.5Q11.5 16.5 13 16.5" fill="none" stroke="#333" stroke-width=".8"/></svg>
<svg style="left:231px;top:296px;" width="21" height="18" viewBox="0 0 21 18"><defs><linearGradient id="dr1" x1="0" y1="0" x2="1" y2="0"><stop offset="0" stop-color="#111"/><stop offset=".25" stop-color="#2a3a44"/><stop offset=".5" stop-color="#ddd"/><stop offset="1" stop-color="#fff"/></linearGradient></defs><path d="M5.5 0.5Q9 6 10 7Q11 6 15 0.5Q20 8 20 11.5Q20 16.5 15 16.5Q11.5 16.5 10.2 14.5Q9 16.5 5.5 16.5Q0.5 16.5 0.5 11.5Q0.5 7 5.5 0.5Z" fill="url(#dr1)" stroke="#222" stroke-width="1"/></svg>
<svg style="left:260px;top:296px;" width="17" height="18" viewBox="0 0 17 18"><defs><linearGradient id="er1" x1="0" y1="0" x2="1" y2="0"><stop offset="0" stop-color="#777"/><stop offset=".5" stop-color="#eee"/><stop offset="1" stop-color="#fff"/></linearGradient><linearGradient id="er2" x1="0" y1="0" x2="1" y2="0"><stop offset="0" stop-color="#fff"/><stop offset=".7" stop-color="#f4f4f4"/><stop offset="1" stop-color="#999"/></linearGradient></defs><path d="M4 1.5Q4.5 0.5 5.5 0.5H14.5Q16 0.5 15.5 2L13 10.5H2Z" fill="url(#er1)" stroke="#222" stroke-width="1" stroke-dasharray="1.5 .6"/><path d="M1.5 10.5H13Q14.5 10.5 14.5 13.5Q14.5 16.5 13 16.5H1.5Q0.3 16.5 0.3 13.5Q0.3 10.5 1.5 10.5Z" fill="url(#er2)" stroke="#222" stroke-width="1" stroke-dasharray="1.5 .6"/><path d="M13 10.5Q11.5 10.5 11.5 13.5Q11.5 16.5 13 16.5" fill="none" stroke="#333" stroke-width=".8"/></svg>
<svg style="left:205px;top:326px;" width="17" height="17" viewBox="0 0 17 17"><defs><linearGradient id="gr1" x1="0" y1="0" x2="1" y2="1"><stop offset="0" stop-color="#fff"/><stop offset=".55" stop-color="#333"/><stop offset="1" stop-color="#000"/></linearGradient></defs><rect x="0.5" y="0.5" width="15" height="15" fill="url(#gr1)" stroke="#2a2a2a" stroke-width="1.2"/></svg>
<svg style="left:233px;top:326px;" width="17" height="16" viewBox="0 0 17 16"><defs><linearGradient id="fg7" x1="0" y1="0" x2="0" y2="1"><stop offset="0" stop-color="#444"/><stop offset="1" stop-color="#aaa"/></linearGradient></defs><path d="M0.5 15.5Q1 3 15.5 0.5Q14 5 14.5 11.5Q5 12 0.5 15.5Z" fill="url(#fg7)"/><path d="M1 15Q5 11.5 14.5 11" stroke="#f4f4f4" stroke-width="1.1" fill="none"/></svg>
<svg style="left:261px;top:328px;" width="14" height="14" viewBox="0 0 14 14"><path d="M0 0H13.5V4.5L0 8Z" fill="#fff"/><path d="M0 10L13.5 6.5V13.5H0Z" fill="#fff"/></svg>
<svg class="tx" style="left:281.00px;top:313.59px" width="37.1" height="37.2"><text x="5" y="27.91" font-family="Liberation Serif" font-weight="bold" font-size="23.26" fill="#2a2a2a" textLength="17.05" lengthAdjust="spacingAndGlyphs" style="white-space:pre;">A</text></svg>
<svg style="left:312px;top:325px;" width="21" height="19" viewBox="0 0 21 19"><path d="M10 0H13V12H10Z" fill="#fff" stroke="#333"/><path d="M0 10L9 14L0 18Z" fill="#333"/><path d="M9 14H20" stroke="#333" stroke-width="1.4"/><circle cx="11" cy="13.5" r="1.5" fill="#999"/></svg>
<svg style="left:342px;top:325px;" width="16" height="18" viewBox="0 0 16 18"><path d="M6 0L7 5.5L12 6.5L7 7.5L6 13L5 7.5L0 6.5L5 5.5Z" fill="#444"/><path d="M12 9L12.7 12L15.5 12.7L12.7 13.4L12 16.5L11.3 13.4L8.5 12.7L11.3 12Z" fill="#444"/></svg>
<svg style="left:203px;top:353px;" width="22" height="21" viewBox="0 0 22 21"><path d="M6 16L19 18.5Q12 21 6 19.5Z" fill="#b8d8ee" opacity=".8"/><path d="M4.5 12.5Q1 14 1.5 17Q3 20 7 19.5Q10 19 9.5 16Z" fill="#d4ecfa" stroke="#4a80aa" stroke-width=".9"/><path d="M17.2 1.8L7.8 11" stroke="#1e1e1e" stroke-width="4.6" stroke-linecap="round"/><path d="M17.2 1.8L7.8 11" stroke="#bdbdbd" stroke-width="2.6" stroke-linecap="round"/><circle cx="7" cy="12" r="2.6" fill="#fff" stroke="#222" stroke-width="1"/></svg>
<div class="a" style="left:199px;top:378px;width:62px;height:20px;background:#7ec8ec"></div>
<div class="a" style="left:201px;top:380px;width:58px;height:16px;background:#3d2817;border:1px solid #000;box-shadow:inset 0 0 0 1px #fff"></div>
<div class="a" style="left:264px;top:378px;width:62px;height:20px;background:#f0f0ee;border:1px solid #3a3a3a"></div>
<div class="a" style="left:329px;top:378px;width:62px;height:20px;background:repeating-conic-gradient(#7c7c7c 0 25%,#fff 0 50%) 1px 1px/10px 10px;border:1px solid #333"></div>
<div class="a" style="left:197px;top:504px;width:195px;height:3px;background:#5e5e60;border-top:1px solid #8a8a8c;border-bottom:1px solid #3a3a3a"></div>
<div class="a" style="left:197px;top:507px;width:195px;height:21px;background:linear-gradient(#5a5a5b,#434344);border-top:1px solid #3a3a3a;border-bottom:1px solid #3f3f40"></div>
<div class="a" style="left:198px;top:508px;width:18px;height:14px;background:#565657"><svg width="18" height="15" style="left:0;top:0"><path d="M4 4L8 7.5L4 11Z" fill="#7a7a7a"/><rect x="9" y="4" width="6" height="1.6" fill="#7a7a7a"/><rect x="9" y="6.8" width="6" height="1.6" fill="#7a7a7a"/><rect x="9" y="9.6" width="6" height="1.6" fill="#7a7a7a"/></svg></div>
<div class="a" style="left:217px;top:509px;width:99px;height:19px;background:#6d6e70;border-top:1px solid #838385;border-left:1px solid #838385;border-right:1px solid #555"></div>
<svg style="left:221px;top:510px;" width="19" height="18" viewBox="0 0 19 18"><path d="M5 0L7 7Q8 11 6.5 13H3.5Q2 11 3 7Z" fill="#ddd" stroke="#111" stroke-width=".9"/><rect x="0.5" y="14.5" width="9" height="3" rx="1.5" fill="#111"/><path d="M12 3H10V16H12" fill="none" stroke="#111" stroke-width="1.2"/><rect x="14" y="1" width="4" height="4" fill="#eee" stroke="#111"/><rect x="14" y="7" width="4" height="4" fill="#eee" stroke="#111"/><rect x="14" y="13" width="4" height="4" fill="#eee" stroke="#111"/></svg>
<svg class="tx" style="left:238.20px;top:508.17px" width="88.0" height="17.9"><text x="5" y="13.43" font-family="Liberation Sans" font-weight="normal" font-size="11.19" fill="#e4e4e4" textLength="68.00" lengthAdjust="spacingAndGlyphs" style="white-space:pre;">Sub Tool [Brush]</text></svg>
<div class="a" style="left:317px;top:509px;width:27px;height:18px;background:#5c5c5d;border-top:1px solid #707072;border-left:1px solid #6a6a6a"></div>
<svg style="left:321px;top:511px;" width="18" height="15" viewBox="0 0 18 15"><path d="M4 0L6 7Q7 10 5.5 12H2.5Q1 10 2 7Z" fill="#888" stroke="#444" stroke-width=".8"/><rect x="0.5" y="13" width="7" height="2" fill="#333"/><path d="M10 3H9V14H10" fill="none" stroke="#444"/><circle cx="14" cy="4" r="2" fill="#444"/><circle cx="14" cy="11" r="2" fill="#444"/></svg>
<div class="a" style="left:345px;top:509px;width:27px;height:18px;background:#5c5c5d;border-top:1px solid #707072;border-left:1px solid #6a6a6a"></div>
<svg style="left:350px;top:511px;" width="18" height="15" viewBox="0 0 18 15"><path d="M4 0L6 7Q7 10 5.5 12H2.5Q1 10 2 7Z" fill="#888" stroke="#444" stroke-width=".8"/><rect x="0.5" y="13" width="7" height="2" fill="#333"/><circle cx="13" cy="10" r="3.5" fill="none" stroke="#444" stroke-width="1.5" stroke-dasharray="1.5 1"/></svg>
<div class="a" style="left:198px;top:528px;width:193px;height:55px;background:#75767a;border-top:1px solid #3a3a3a"></div>
<div class="a" style="left:387px;top:528px;width:4px;height:55px;background:#58585a;border-left:1px solid #444"></div>
<div class="a" style="left:199px;top:529px;width:62px;height:25px;background:linear-gradient(#809aaa,#6a8190);border:1px solid #38383a;border-radius:3px;box-shadow:inset 1px 1px 0 #98aebb"></div>
<div class="a" style="left:203px;top:533px;width:18px;height:18px;background:#ffff00"></div>
<svg style="left:204px;top:532px;" width="16" height="20" viewBox="0 0 16 20"><path d="M0.8 3.5L5 0.8L15.5 16.5L14.8 20L12 18Z" fill="#fff" stroke="#111" stroke-width="1.2" stroke-linejoin="round"/><path d="M2.2 2.8L8.5 12.5M3.8 1.8L10.8 12" stroke="#555" stroke-width="1"/><path d="M0.8 3.5L5 0.8L6.5 3L2.3 5.8Z" fill="#888"/><path d="M12.3 16.5L15.3 15.8L14.8 20Z" fill="#111"/></svg>
<div class="a" style="left:225.4px;top:531.5px;width:34.599999999999994px;height:18px;overflow:hidden;-webkit-mask-image:linear-gradient(90deg,#000 0,#000 55%,rgba(0,0,0,.35) 75%)"><div class="a" style="left:0;top:-531.5px"><svg class="tx" style="left:-5.00px;top:531.20px" width="66.2" height="19.1"><text x="5" y="14.30" font-family="Liberation Sans" font-weight="normal" font-size="11.92" fill="#f0f0f0" textLength="46.19" lengthAdjust="spacingAndGlyphs" style="white-space:pre;">Most used</text></svg></div></div>
<div class="a" style="left:262px;top:529px;width:61px;height:25px;background:linear-gradient(#6e6f72,#65666a);border:1px solid #38383a;border-radius:3px;box-shadow:inset 1px 1px 0 #7e7e80"></div>
<svg style="left:265px;top:532px;" width="22" height="21" viewBox="0 0 22 21"><defs><linearGradient id="hg" x1="0" y1="0" x2="1" y2="1"><stop offset="0" stop-color="#ddd"/><stop offset="1" stop-color="#777"/></linearGradient><linearGradient id="sm" x1="0" y1="0" x2="1" y2="0"><stop offset="0" stop-color="#b8d8ee"/><stop offset="1" stop-color="#b8d8ee" stop-opacity="0"/></linearGradient><linearGradient id="sg7" x1="0" y1="0" x2="1" y2="0"><stop offset="0" stop-color="#aaa"/><stop offset="1" stop-color="#aaa" stop-opacity="0"/></linearGradient></defs><path d="M6 16L19 18.5Q12 21 6 19.5Z" fill="url(#sm)"/><path d="M4.5 12.5Q1 14 1.5 17Q3 20 7 19.5Q10 19 9.5 16Z" fill="#d4ecfa" stroke="#4a80aa" stroke-width=".9"/><path d="M17.2 1.8L7.8 11" stroke="#1e1e1e" stroke-width="4.6" stroke-linecap="round"/><path d="M17.2 1.8L7.8 11" stroke="url(#hg)" stroke-width="2.6" stroke-linecap="round"/><circle cx="7" cy="12" r="2.6" fill="#fff" stroke="#222" stroke-width="1"/></svg>
<div class="a" style="left:288.5px;top:531.5px;width:33.5px;height:18px;overflow:hidden;-webkit-mask-image:linear-gradient(90deg,#000 0,#000 55%,rgba(0,0,0,.35) 75%)"><div class="a" style="left:0;top:-531.5px"><svg class="tx" style="left:-5.00px;top:531.20px" width="68.0" height="19.1"><text x="5" y="14.30" font-family="Liberation Sans" font-weight="normal" font-size="11.92" fill="#f0f0f0" textLength="48.03" lengthAdjust="spacingAndGlyphs" style="white-space:pre;">Watercolor</text></svg></div></div>
<div class="a" style="left:324px;top:529px;width:62px;height:25px;background:linear-gradient(#6e6f72,#65666a);border:1px solid #38383a;border-radius:3px;box-shadow:inset 1px 1px 0 #7e7e80"></div>
<svg style="left:327px;top:532px;" width="22" height="21" viewBox="0 0 22 21"><defs><linearGradient id="hg" x1="0" y1="0" x2="1" y2="1"><stop offset="0" stop-color="#ddd"/><stop offset="1" stop-color="#777"/></linearGradient><linearGradient id="sm" x1="0" y1="0" x2="1" y2="0"><stop offset="0" stop-color="#b8d8ee"/><stop offset="1" stop-color="#b8d8ee" stop-opacity="0"/></linearGradient><linearGradient id="sg7" x1="0" y1="0" x2="1" y2="0"><stop offset="0" stop-color="#aaa"/><stop offset="1" stop-color="#aaa" stop-opacity="0"/></linearGradient></defs><path d="M6 16L19 18.5Q12 20.5 6 19Z" fill="url(#sg7)"/><path d="M4.5 12.5Q1 14 1.5 17Q4 20 8 19Q10 18 9.5 16Z" fill="#f0f0f0" stroke="#111" stroke-width=".9"/><path d="M2 17.5Q5 20 9 18.5L8 17Q5 18.5 2 17.5Z" fill="#111"/><path d="M17.2 1.8L7.8 11" stroke="#1e1e1e" stroke-width="4.6" stroke-linecap="round"/><path d="M17.2 1.8L7.8 11" stroke="url(#hg)" stroke-width="2.6" stroke-linecap="round"/><circle cx="7" cy="12" r="2.6" fill="#fff" stroke="#222" stroke-width="1"/></svg>
<div class="a" style="left:350.5px;top:531.5px;width:34.5px;height:18px;overflow:hidden;-webkit-mask-image:linear-gradient(90deg,#000 0,#000 55%,rgba(0,0,0,.35) 75%)"><div class="a" style="left:0;top:-531.5px"><svg class="tx" style="left:-5.00px;top:531.20px" width="57.3" height="19.1"><text x="5" y="14.30" font-family="Liberation Sans" font-weight="normal" font-size="11.92" fill="#f0f0f0" textLength="37.29" lengthAdjust="spacingAndGlyphs" style="white-space:pre;">India ink</text></svg></div></div>
<div class="a" style="left:199px;top:555px;width:62px;height:25px;background:linear-gradient(#6e6f72,#65666a);border:1px solid #38383a;border-radius:3px;box-shadow:inset 1px 1px 0 #7e7e80"></div>
<svg style="left:202px;top:558px;" width="22" height="21" viewBox="0 0 22 21"><defs><linearGradient id="hg" x1="0" y1="0" x2="1" y2="1"><stop offset="0" stop-color="#ddd"/><stop offset="1" stop-color="#777"/></linearGradient><linearGradient id="sm" x1="0" y1="0" x2="1" y2="0"><stop offset="0" stop-color="#b8d8ee"/><stop offset="1" stop-color="#b8d8ee" stop-opacity="0"/></linearGradient><linearGradient id="sg7" x1="0" y1="0" x2="1" y2="0"><stop offset="0" stop-color="#aaa"/><stop offset="1" stop-color="#aaa" stop-opacity="0"/></linearGradient></defs><path d="M1.5 16.5H13.5L19 21.5H4.5Z" fill="#f2c49a"/><path d="M4.5 12.5Q1 14 1.5 17Q3 19.5 6.5 19Q9 18 9 16Z" fill="#f4f4f4" stroke="#333" stroke-width=".8"/><path d="M17.2 1.8L7.8 11" stroke="#1e1e1e" stroke-width="4.6" stroke-linecap="round"/><path d="M17.2 1.8L7.8 11" stroke="url(#hg)" stroke-width="2.6" stroke-linecap="round"/><circle cx="7" cy="12" r="2.6" fill="#fff" stroke="#222" stroke-width="1"/></svg>
<div class="a" style="left:225.4px;top:557.3px;width:34.599999999999994px;height:18px;overflow:hidden;-webkit-mask-image:linear-gradient(90deg,#000 0,#000 55%,rgba(0,0,0,.35) 75%)"><div class="a" style="left:0;top:-557.3px"><svg class="tx" style="left:-5.00px;top:557.00px" width="52.5" height="19.1"><text x="5" y="14.30" font-family="Liberation Sans" font-weight="normal" font-size="11.92" fill="#f0f0f0" textLength="32.52" lengthAdjust="spacingAndGlyphs" style="white-space:pre;">Eddie's</text></svg></div></div>
<div class="a" style="left:262px;top:555px;width:61px;height:25px;background:linear-gradient(#6e6f72,#65666a);border:1px solid #38383a;border-radius:3px;box-shadow:inset 1px 1px 0 #7e7e80"></div>
<svg style="left:265px;top:558px;" width="22" height="21" viewBox="0 0 22 21"><defs><linearGradient id="hg" x1="0" y1="0" x2="1" y2="1"><stop offset="0" stop-color="#ddd"/><stop offset="1" stop-color="#777"/></linearGradient><linearGradient id="sm" x1="0" y1="0" x2="1" y2="0"><stop offset="0" stop-color="#b8d8ee"/><stop offset="1" stop-color="#b8d8ee" stop-opacity="0"/></linearGradient><linearGradient id="sg7" x1="0" y1="0" x2="1" y2="0"><stop offset="0" stop-color="#aaa"/><stop offset="1" stop-color="#aaa" stop-opacity="0"/></linearGradient></defs><path d="M1.5 16.5H13.5L19 21.5H4.5Z" fill="#f2c49a"/><path d="M4.5 12.5Q1 14 1.5 17Q3 19.5 6.5 19Q9 18 9 16Z" fill="#f4f4f4" stroke="#333" stroke-width=".8"/><path d="M17.2 1.8L7.8 11" stroke="#1e1e1e" stroke-width="4.6" stroke-linecap="round"/><path d="M17.2 1.8L7.8 11" stroke="url(#hg)" stroke-width="2.6" stroke-linecap="round"/><circle cx="7" cy="12" r="2.6" fill="#fff" stroke="#222" stroke-width="1"/></svg>
<div class="a" style="left:288.5px;top:557.3px;width:33.5px;height:18px;overflow:hidden;-webkit-mask-image:linear-gradient(90deg,#000 0,#000 55%,rgba(0,0,0,.35) 75%)"><div class="a" style="left:0;top:-557.3px"><svg class="tx" style="left:-5.00px;top:557.00px" width="56.7" height="19.1"><text x="5" y="14.30" font-family="Liberation Sans" font-weight="normal" font-size="11.92" fill="#f0f0f0" textLength="36.73" lengthAdjust="spacingAndGlyphs" style="white-space:pre;">Oil paint</text></svg></div></div>
<div class="a" style="left:198px;top:582px;width:193px;height:180px;background:#75767a"></div>
<div class="a" style="left:199px;top:583px;width:175px;height:158px;background:#6f7073;border-top:1px solid #3a3a3a"></div>
<div class="a" style="left:199px;top:583px;width:175px;height:23px;background:linear-gradient(#86a0b0,#6c8494)"></div>
<svg style="left:0;top:0;clip-path:inset(583px 538px 160px 199px)" width="912" height="766"><defs><filter id="wb1" x="-10%" y="-50%" width="120%" height="200%"><feGaussianBlur stdDeviation=".6"/></filter></defs><path d="M211.1 600.1 L211.5 600.2 L212.1 600.2 L212.6 600.1 L213.2 600.0 L213.8 599.8 L214.4 599.7 L215.1 599.5 L215.8 599.3 L216.5 599.1 L217.2 598.8 L218.0 598.6 L218.8 598.3 L219.5 598.1 L220.4 597.8 L221.2 597.5 L222.0 597.2 L222.9 596.9 L223.7 596.6 L224.6 596.3 L225.5 596.0 L226.4 595.7 L227.3 595.4 L228.2 595.1 L229.1 594.8 L230.0 594.6 L230.9 594.3 L231.8 594.1 L232.7 593.9 L233.6 593.6 L234.5 593.4 L235.4 593.3 L236.2 593.1 L237.1 593.0 L237.9 592.9 L238.7 592.8 L239.5 592.7 L240.3 592.7 L241.0 592.7 L241.8 592.7 L242.4 592.7 L243.1 592.8 L243.8 592.9 L244.4 593.0 L245.1 593.2 L245.9 593.4 L246.6 593.6 L247.3 593.8 L248.1 594.1 L248.9 594.4 L249.7 594.7 L250.5 595.1 L251.3 595.4 L252.1 595.8 L253.0 596.2 L253.8 596.6 L254.7 597.0 L255.6 597.5 L256.5 597.9 L257.4 598.3 L258.3 598.8 L259.2 599.2 L260.1 599.7 L261.0 600.1 L262.0 600.5 L262.9 601.0 L263.9 601.4 L264.8 601.8 L265.8 602.1 L266.8 602.5 L267.8 602.9 L268.8 603.2 L269.8 603.5 L270.8 603.8 L271.8 604.0 L272.8 604.2 L273.8 604.4 L274.9 604.5 L275.9 604.6 L277.0 604.6 L278.0 604.6 L279.0 604.5 L280.0 604.4 L281.1 604.2 L282.1 604.0 L283.1 603.8 L284.2 603.6 L285.2 603.3 L286.2 603.0 L287.2 602.6 L288.2 602.3 L289.3 601.9 L290.3 601.5 L291.3 601.1 L292.3 600.6 L293.3 600.2 L294.3 599.7 L295.3 599.3 L296.2 598.8 L297.2 598.3 L298.1 597.8 L299.0 597.3 L300.0 596.8 L300.8 596.3 L301.7 595.8 L302.6 595.3 L303.4 594.8 L304.2 594.4 L305.0 593.9 L305.8 593.4 L306.5 593.0 L307.2 592.5 L307.9 592.1 L308.5 591.6 L309.2 591.2 L309.7 590.9 L310.3 590.5 L310.8 590.1 L311.3 589.8 L311.7 589.5 L312.1 589.1 L311.9 588.9 L311.4 588.8 L310.9 588.9 L310.3 589.0 L309.7 589.2 L309.0 589.3 L308.4 589.5 L307.6 589.7 L306.9 590.0 L306.1 590.2 L305.3 590.5 L304.5 590.8 L303.7 591.1 L302.8 591.4 L301.9 591.7 L301.0 592.0 L300.1 592.3 L299.2 592.7 L298.2 593.0 L297.3 593.3 L296.3 593.7 L295.4 594.0 L294.4 594.3 L293.4 594.7 L292.4 595.0 L291.4 595.3 L290.4 595.5 L289.5 595.8 L288.5 596.1 L287.5 596.3 L286.6 596.5 L285.6 596.7 L284.7 596.9 L283.8 597.1 L282.9 597.2 L282.0 597.3 L281.1 597.4 L280.3 597.4 L279.5 597.5 L278.7 597.5 L278.0 597.4 L277.3 597.4 L276.6 597.3 L275.9 597.1 L275.2 597.0 L274.4 596.8 L273.7 596.6 L272.9 596.3 L272.1 596.1 L271.3 595.8 L270.5 595.4 L269.7 595.1 L268.9 594.7 L268.0 594.3 L267.2 594.0 L266.3 593.5 L265.5 593.1 L264.6 592.7 L263.7 592.2 L262.8 591.8 L261.9 591.3 L261.0 590.9 L260.1 590.4 L259.2 590.0 L258.3 589.6 L257.3 589.1 L256.4 588.7 L255.5 588.3 L254.5 587.9 L253.5 587.5 L252.6 587.2 L251.6 586.8 L250.6 586.5 L249.6 586.2 L248.7 586.0 L247.7 585.8 L246.6 585.6 L245.6 585.4 L244.6 585.3 L243.6 585.3 L242.6 585.3 L241.6 585.3 L240.6 585.4 L239.6 585.6 L238.6 585.7 L237.6 585.9 L236.6 586.2 L235.6 586.4 L234.7 586.7 L233.7 587.0 L232.7 587.3 L231.8 587.7 L230.8 588.1 L229.9 588.4 L228.9 588.8 L228.0 589.3 L227.1 589.7 L226.2 590.1 L225.3 590.6 L224.4 591.0 L223.6 591.5 L222.7 592.0 L221.9 592.4 L221.0 592.9 L220.3 593.4 L219.5 593.9 L218.7 594.3 L218.0 594.8 L217.3 595.2 L216.6 595.7 L215.9 596.1 L215.3 596.6 L214.7 597.0 L214.1 597.4 L213.5 597.8 L213.0 598.1 L212.5 598.5 L212.1 598.9 L211.7 599.2 L211.3 599.5 L210.9 599.9Z" fill="#181b1e"/></svg>
<div class="a" style="left:199px;top:606px;width:175px;height:1px;background:#3e3e40"></div>
<div class="a" style="left:319px;top:589px;width:54px;height:17px;background:rgba(95,115,130,.85)"></div>
<svg class="tx" style="left:318.30px;top:586.87px" width="68.5" height="19.8"><text x="5" y="14.83" font-family="Liberation Sans" font-weight="normal" font-size="12.35" fill="#f2f2f2" textLength="48.48" lengthAdjust="spacingAndGlyphs" style="white-space:pre;">Pencil R 3</text></svg>
<div class="a" style="left:199px;top:607px;width:175px;height:23px;background:linear-gradient(#747579,#6c6d70)"></div>
<svg style="left:0;top:0;clip-path:inset(607px 538px 136px 199px)" width="912" height="766"><defs><filter id="wb1" x="-10%" y="-50%" width="120%" height="200%"><feGaussianBlur stdDeviation=".6"/></filter></defs><path d="M211.1 624.1 L211.5 624.0 L211.9 623.9 L212.4 623.7 L213.0 623.5 L213.5 623.3 L214.1 623.1 L214.8 622.8 L215.4 622.6 L216.1 622.3 L216.8 622.0 L217.6 621.8 L218.3 621.5 L219.1 621.1 L219.9 620.8 L220.7 620.5 L221.6 620.2 L222.4 619.9 L223.3 619.6 L224.2 619.2 L225.0 618.9 L225.9 618.6 L226.8 618.3 L227.7 618.0 L228.7 617.7 L229.6 617.4 L230.5 617.1 L231.4 616.9 L232.3 616.6 L233.2 616.4 L234.1 616.2 L235.0 616.0 L235.9 615.9 L236.8 615.7 L237.7 615.6 L238.5 615.5 L239.3 615.4 L240.2 615.4 L240.9 615.4 L241.7 615.4 L242.5 615.4 L243.2 615.5 L243.9 615.6 L244.6 615.8 L245.4 615.9 L246.2 616.1 L246.9 616.4 L247.7 616.6 L248.5 616.9 L249.3 617.2 L250.1 617.5 L251.0 617.9 L251.8 618.3 L252.6 618.7 L253.5 619.1 L254.4 619.5 L255.2 619.9 L256.1 620.3 L257.0 620.8 L257.9 621.2 L258.8 621.7 L259.7 622.1 L260.6 622.5 L261.6 623.0 L262.5 623.4 L263.4 623.8 L264.4 624.2 L265.3 624.6 L266.3 625.0 L267.2 625.4 L268.2 625.7 L269.2 626.0 L270.1 626.3 L271.1 626.6 L272.1 626.8 L273.1 627.0 L274.0 627.1 L275.0 627.3 L276.0 627.3 L277.0 627.4 L278.0 627.3 L279.0 627.3 L280.0 627.2 L280.9 627.0 L281.9 626.8 L282.9 626.6 L283.9 626.4 L284.9 626.1 L285.9 625.8 L286.9 625.5 L287.9 625.1 L288.9 624.8 L289.9 624.4 L290.9 624.0 L291.9 623.6 L292.9 623.1 L293.9 622.7 L294.8 622.2 L295.8 621.8 L296.7 621.3 L297.7 620.8 L298.6 620.4 L299.5 619.9 L300.4 619.4 L301.3 618.9 L302.2 618.5 L303.0 618.0 L303.8 617.5 L304.6 617.1 L305.4 616.7 L306.2 616.2 L306.9 615.8 L307.6 615.4 L308.3 615.1 L308.9 614.7 L309.5 614.4 L310.1 614.1 L310.6 613.8 L311.1 613.5 L311.6 613.3 L312.1 613.1 L311.9 612.9 L311.5 613.0 L311.0 613.2 L310.5 613.4 L309.9 613.6 L309.3 613.8 L308.6 614.0 L307.9 614.3 L307.2 614.6 L306.5 614.9 L305.7 615.2 L304.9 615.5 L304.1 615.9 L303.2 616.2 L302.3 616.5 L301.4 616.9 L300.5 617.2 L299.6 617.6 L298.7 618.0 L297.7 618.3 L296.8 618.7 L295.8 619.0 L294.8 619.4 L293.8 619.7 L292.8 620.0 L291.8 620.3 L290.8 620.6 L289.8 620.9 L288.9 621.2 L287.9 621.5 L286.9 621.7 L285.9 621.9 L285.0 622.1 L284.0 622.3 L283.1 622.4 L282.2 622.5 L281.3 622.6 L280.4 622.7 L279.6 622.7 L278.8 622.7 L278.0 622.7 L277.2 622.6 L276.5 622.5 L275.7 622.4 L274.9 622.2 L274.2 622.0 L273.4 621.8 L272.6 621.5 L271.7 621.2 L270.9 620.9 L270.1 620.6 L269.2 620.2 L268.4 619.9 L267.5 619.5 L266.7 619.1 L265.8 618.7 L264.9 618.2 L264.1 617.8 L263.2 617.4 L262.3 616.9 L261.4 616.5 L260.5 616.0 L259.6 615.6 L258.6 615.1 L257.7 614.7 L256.8 614.3 L255.9 613.9 L254.9 613.5 L254.0 613.1 L253.1 612.7 L252.1 612.4 L251.2 612.0 L250.2 611.7 L249.3 611.5 L248.3 611.2 L247.4 611.0 L246.4 610.8 L245.4 610.7 L244.5 610.6 L243.5 610.6 L242.5 610.6 L241.6 610.6 L240.6 610.7 L239.7 610.8 L238.8 611.0 L237.8 611.2 L236.9 611.4 L235.9 611.7 L235.0 611.9 L234.0 612.2 L233.1 612.6 L232.1 612.9 L231.2 613.3 L230.3 613.6 L229.4 614.0 L228.5 614.4 L227.5 614.8 L226.6 615.3 L225.8 615.7 L224.9 616.1 L224.0 616.6 L223.2 617.0 L222.3 617.5 L221.5 617.9 L220.7 618.4 L219.9 618.8 L219.2 619.3 L218.4 619.7 L217.7 620.1 L217.0 620.5 L216.3 620.9 L215.6 621.3 L215.0 621.7 L214.4 622.0 L213.8 622.4 L213.3 622.7 L212.7 623.0 L212.2 623.2 L211.8 623.5 L211.3 623.7 L210.9 623.9Z" fill="#080808"/></svg>
<div class="a" style="left:199px;top:630px;width:175px;height:1px;background:#3e3e40"></div>
<svg class="tx" style="left:328.60px;top:610.87px" width="58.2" height="19.8"><text x="5" y="14.83" font-family="Liberation Sans" font-weight="normal" font-size="12.35" fill="#f2f2f2" textLength="38.18" lengthAdjust="spacingAndGlyphs" style="white-space:pre;">G-pen 2</text></svg>
<div class="a" style="left:199px;top:631px;width:175px;height:23px;background:linear-gradient(#747579,#6c6d70)"></div>
<svg style="left:0;top:0;clip-path:inset(631px 538px 112px 199px)" width="912" height="766"><defs><filter id="wb1" x="-10%" y="-50%" width="120%" height="200%"><feGaussianBlur stdDeviation=".6"/></filter></defs><path d="M211.1 648.1 L211.5 648.0 L211.9 647.9 L212.4 647.7 L213.0 647.5 L213.5 647.3 L214.1 647.1 L214.8 646.8 L215.4 646.6 L216.1 646.3 L216.8 646.0 L217.6 645.8 L218.3 645.5 L219.1 645.1 L219.9 644.8 L220.7 644.5 L221.6 644.2 L222.4 643.9 L223.3 643.6 L224.2 643.2 L225.0 642.9 L225.9 642.6 L226.8 642.3 L227.7 642.0 L228.7 641.7 L229.6 641.4 L230.5 641.1 L231.4 640.9 L232.3 640.6 L233.2 640.4 L234.1 640.2 L235.0 640.0 L235.9 639.9 L236.8 639.7 L237.7 639.6 L238.5 639.5 L239.3 639.4 L240.2 639.4 L240.9 639.4 L241.7 639.4 L242.5 639.4 L243.2 639.5 L243.9 639.6 L244.6 639.8 L245.4 639.9 L246.2 640.1 L246.9 640.4 L247.7 640.6 L248.5 640.9 L249.3 641.2 L250.1 641.5 L251.0 641.9 L251.8 642.3 L252.6 642.7 L253.5 643.1 L254.4 643.5 L255.2 643.9 L256.1 644.3 L257.0 644.8 L257.9 645.2 L258.8 645.7 L259.7 646.1 L260.6 646.5 L261.6 647.0 L262.5 647.4 L263.4 647.8 L264.4 648.2 L265.3 648.6 L266.3 649.0 L267.2 649.4 L268.2 649.7 L269.2 650.0 L270.1 650.3 L271.1 650.6 L272.1 650.8 L273.1 651.0 L274.0 651.1 L275.0 651.3 L276.0 651.3 L277.0 651.4 L278.0 651.3 L279.0 651.3 L280.0 651.2 L280.9 651.0 L281.9 650.8 L282.9 650.6 L283.9 650.4 L284.9 650.1 L285.9 649.8 L286.9 649.5 L287.9 649.1 L288.9 648.8 L289.9 648.4 L290.9 648.0 L291.9 647.6 L292.9 647.1 L293.9 646.7 L294.8 646.2 L295.8 645.8 L296.7 645.3 L297.7 644.8 L298.6 644.4 L299.5 643.9 L300.4 643.4 L301.3 642.9 L302.2 642.5 L303.0 642.0 L303.8 641.5 L304.6 641.1 L305.4 640.7 L306.2 640.2 L306.9 639.8 L307.6 639.4 L308.3 639.1 L308.9 638.7 L309.5 638.4 L310.1 638.1 L310.6 637.8 L311.1 637.5 L311.6 637.3 L312.1 637.1 L311.9 636.9 L311.5 637.0 L311.0 637.2 L310.5 637.4 L309.9 637.6 L309.3 637.8 L308.6 638.0 L307.9 638.3 L307.2 638.6 L306.5 638.9 L305.7 639.2 L304.9 639.5 L304.1 639.9 L303.2 640.2 L302.3 640.5 L301.4 640.9 L300.5 641.2 L299.6 641.6 L298.7 642.0 L297.7 642.3 L296.8 642.7 L295.8 643.0 L294.8 643.4 L293.8 643.7 L292.8 644.0 L291.8 644.3 L290.8 644.6 L289.8 644.9 L288.9 645.2 L287.9 645.5 L286.9 645.7 L285.9 645.9 L285.0 646.1 L284.0 646.3 L283.1 646.4 L282.2 646.5 L281.3 646.6 L280.4 646.7 L279.6 646.7 L278.8 646.7 L278.0 646.7 L277.2 646.6 L276.5 646.5 L275.7 646.4 L274.9 646.2 L274.2 646.0 L273.4 645.8 L272.6 645.5 L271.7 645.2 L270.9 644.9 L270.1 644.6 L269.2 644.2 L268.4 643.9 L267.5 643.5 L266.7 643.1 L265.8 642.7 L264.9 642.2 L264.1 641.8 L263.2 641.4 L262.3 640.9 L261.4 640.5 L260.5 640.0 L259.6 639.6 L258.6 639.1 L257.7 638.7 L256.8 638.3 L255.9 637.9 L254.9 637.5 L254.0 637.1 L253.1 636.7 L252.1 636.4 L251.2 636.0 L250.2 635.7 L249.3 635.5 L248.3 635.2 L247.4 635.0 L246.4 634.8 L245.4 634.7 L244.5 634.6 L243.5 634.6 L242.5 634.6 L241.6 634.6 L240.6 634.7 L239.7 634.8 L238.8 635.0 L237.8 635.2 L236.9 635.4 L235.9 635.7 L235.0 635.9 L234.0 636.2 L233.1 636.6 L232.1 636.9 L231.2 637.3 L230.3 637.6 L229.4 638.0 L228.5 638.4 L227.5 638.8 L226.6 639.3 L225.8 639.7 L224.9 640.1 L224.0 640.6 L223.2 641.0 L222.3 641.5 L221.5 641.9 L220.7 642.4 L219.9 642.8 L219.2 643.3 L218.4 643.7 L217.7 644.1 L217.0 644.5 L216.3 644.9 L215.6 645.3 L215.0 645.7 L214.4 646.0 L213.8 646.4 L213.3 646.7 L212.7 647.0 L212.2 647.2 L211.8 647.5 L211.3 647.7 L210.9 647.9Z" fill="#0c0c0c"/></svg>
<div class="a" style="left:199px;top:654px;width:175px;height:1px;background:#3e3e40"></div>
<svg class="tx" style="left:352.50px;top:634.87px" width="34.3" height="19.8"><text x="5" y="14.83" font-family="Liberation Sans" font-weight="normal" font-size="12.35" fill="#f2f2f2" textLength="14.30" lengthAdjust="spacingAndGlyphs" style="white-space:pre;">Pin</text></svg>
<div class="a" style="left:199px;top:655px;width:175px;height:23px;background:linear-gradient(#747579,#6c6d70)"></div>
<svg style="left:0;top:0;clip-path:inset(655px 538px 88px 199px)" width="912" height="766"><defs><filter id="wb1" x="-10%" y="-50%" width="120%" height="200%"><feGaussianBlur stdDeviation=".6"/></filter></defs><path d="M211.1 672.1 L211.5 672.0 L212.0 671.9 L212.5 671.8 L213.0 671.6 L213.6 671.4 L214.2 671.2 L214.8 671.0 L215.5 670.8 L216.2 670.5 L216.9 670.2 L217.7 670.0 L218.4 669.7 L219.2 669.4 L220.0 669.1 L220.8 668.7 L221.7 668.4 L222.5 668.1 L223.4 667.8 L224.3 667.5 L225.2 667.2 L226.0 666.9 L226.9 666.6 L227.9 666.3 L228.8 666.0 L229.7 665.7 L230.6 665.4 L231.5 665.2 L232.4 664.9 L233.3 664.7 L234.2 664.5 L235.1 664.3 L236.0 664.2 L236.9 664.0 L237.7 663.9 L238.6 663.8 L239.4 663.7 L240.2 663.7 L241.0 663.7 L241.7 663.7 L242.5 663.7 L243.2 663.8 L243.9 663.9 L244.6 664.0 L245.3 664.2 L246.1 664.4 L246.9 664.6 L247.6 664.9 L248.4 665.1 L249.2 665.5 L250.0 665.8 L250.9 666.1 L251.7 666.5 L252.5 666.9 L253.4 667.3 L254.3 667.7 L255.1 668.1 L256.0 668.6 L256.9 669.0 L257.8 669.4 L258.7 669.9 L259.6 670.3 L260.5 670.8 L261.5 671.2 L262.4 671.6 L263.3 672.1 L264.3 672.5 L265.2 672.9 L266.2 673.2 L267.1 673.6 L268.1 673.9 L269.1 674.3 L270.0 674.5 L271.0 674.8 L272.0 675.0 L273.0 675.2 L274.0 675.4 L275.0 675.5 L276.0 675.6 L277.0 675.6 L278.0 675.6 L279.0 675.5 L280.0 675.4 L281.0 675.3 L282.0 675.1 L283.0 674.9 L284.0 674.6 L285.0 674.4 L286.0 674.1 L287.0 673.7 L288.0 673.4 L289.0 673.0 L290.0 672.6 L291.0 672.2 L292.0 671.8 L293.0 671.4 L294.0 670.9 L294.9 670.5 L295.9 670.0 L296.8 669.5 L297.8 669.1 L298.7 668.6 L299.6 668.1 L300.5 667.6 L301.4 667.1 L302.3 666.7 L303.1 666.2 L303.9 665.7 L304.7 665.3 L305.5 664.8 L306.3 664.4 L307.0 664.0 L307.7 663.6 L308.3 663.2 L309.0 662.8 L309.6 662.5 L310.1 662.2 L310.7 661.9 L311.2 661.6 L311.6 661.3 L312.1 661.1 L311.9 660.9 L311.5 661.0 L311.0 661.1 L310.4 661.3 L309.8 661.5 L309.2 661.7 L308.5 661.9 L307.9 662.2 L307.1 662.5 L306.4 662.7 L305.6 663.0 L304.8 663.3 L304.0 663.7 L303.1 664.0 L302.2 664.3 L301.3 664.7 L300.4 665.0 L299.5 665.4 L298.6 665.7 L297.6 666.1 L296.6 666.4 L295.7 666.8 L294.7 667.1 L293.7 667.4 L292.7 667.8 L291.7 668.1 L290.7 668.4 L289.8 668.7 L288.8 668.9 L287.8 669.2 L286.8 669.4 L285.9 669.6 L284.9 669.8 L284.0 670.0 L283.0 670.1 L282.1 670.2 L281.3 670.3 L280.4 670.4 L279.6 670.4 L278.8 670.4 L278.0 670.4 L277.3 670.3 L276.5 670.2 L275.8 670.1 L275.0 669.9 L274.2 669.7 L273.4 669.5 L272.6 669.3 L271.8 669.0 L271.0 668.7 L270.2 668.4 L269.3 668.0 L268.5 667.6 L267.6 667.3 L266.8 666.9 L265.9 666.4 L265.0 666.0 L264.2 665.6 L263.3 665.1 L262.4 664.7 L261.5 664.2 L260.6 663.8 L259.7 663.3 L258.8 662.9 L257.8 662.5 L256.9 662.0 L256.0 661.6 L255.0 661.2 L254.1 660.8 L253.2 660.5 L252.2 660.1 L251.3 659.8 L250.3 659.5 L249.4 659.2 L248.4 659.0 L247.4 658.7 L246.4 658.6 L245.5 658.4 L244.5 658.3 L243.5 658.3 L242.5 658.3 L241.6 658.3 L240.6 658.4 L239.7 658.6 L238.7 658.7 L237.8 658.9 L236.8 659.1 L235.8 659.4 L234.9 659.7 L233.9 660.0 L233.0 660.3 L232.1 660.6 L231.1 661.0 L230.2 661.4 L229.3 661.8 L228.3 662.2 L227.4 662.6 L226.5 663.0 L225.7 663.4 L224.8 663.9 L223.9 664.3 L223.1 664.8 L222.2 665.2 L221.4 665.7 L220.6 666.1 L219.8 666.6 L219.1 667.0 L218.3 667.5 L217.6 667.9 L216.9 668.3 L216.2 668.7 L215.6 669.1 L214.9 669.5 L214.3 669.9 L213.8 670.2 L213.2 670.6 L212.7 670.9 L212.2 671.2 L211.8 671.4 L211.3 671.7 L210.9 671.9Z" fill="#101010" filter="url(#wb1)"/></svg>
<div class="a" style="left:199px;top:678px;width:175px;height:1px;background:#3e3e40"></div>
<div class="a" style="left:262px;top:662px;width:112px;height:16px;background:#6f7073"></div>
<svg class="tx" style="left:260.00px;top:658.87px" width="126.8" height="19.8"><text x="5" y="14.83" font-family="Liberation Sans" font-weight="normal" font-size="12.35" fill="#f2f2f2" textLength="106.81" lengthAdjust="spacingAndGlyphs" style="white-space:pre;">Opaque watercolor col</text></svg>
<div class="a" style="left:199px;top:679px;width:175px;height:23px;background:linear-gradient(#747579,#6c6d70)"></div>
<svg style="left:0;top:0;clip-path:inset(679px 538px 64px 199px)" width="912" height="766"><defs><filter id="wb1" x="-10%" y="-50%" width="120%" height="200%"><feGaussianBlur stdDeviation=".6"/></filter></defs><path d="M211.1 696.1 L211.5 696.0 L212.0 695.9 L212.5 695.8 L213.0 695.6 L213.6 695.4 L214.2 695.2 L214.9 695.0 L215.5 694.8 L216.2 694.5 L217.0 694.3 L217.7 694.0 L218.5 693.7 L219.2 693.4 L220.1 693.1 L220.9 692.8 L221.7 692.5 L222.6 692.2 L223.4 691.9 L224.3 691.6 L225.2 691.3 L226.1 691.0 L227.0 690.7 L227.9 690.4 L228.8 690.1 L229.7 689.8 L230.6 689.6 L231.5 689.3 L232.5 689.1 L233.4 688.9 L234.3 688.7 L235.1 688.5 L236.0 688.3 L236.9 688.2 L237.7 688.1 L238.6 688.0 L239.4 687.9 L240.2 687.9 L241.0 687.9 L241.7 687.9 L242.4 687.9 L243.1 688.0 L243.9 688.1 L244.6 688.2 L245.3 688.4 L246.0 688.6 L246.8 688.8 L247.6 689.1 L248.3 689.4 L249.1 689.7 L250.0 690.0 L250.8 690.4 L251.6 690.7 L252.4 691.1 L253.3 691.5 L254.2 691.9 L255.0 692.3 L255.9 692.8 L256.8 693.2 L257.7 693.7 L258.6 694.1 L259.5 694.6 L260.4 695.0 L261.4 695.4 L262.3 695.9 L263.2 696.3 L264.2 696.7 L265.1 697.1 L266.1 697.5 L267.0 697.8 L268.0 698.2 L269.0 698.5 L270.0 698.8 L271.0 699.0 L272.0 699.3 L273.0 699.5 L274.0 699.6 L275.0 699.7 L276.0 699.8 L277.0 699.8 L278.0 699.8 L279.0 699.7 L280.0 699.6 L281.0 699.5 L282.0 699.3 L283.0 699.1 L284.0 698.8 L285.0 698.5 L286.0 698.2 L287.0 697.9 L288.0 697.5 L289.0 697.2 L290.0 696.8 L291.0 696.4 L292.0 695.9 L293.0 695.5 L294.0 695.1 L295.0 694.6 L295.9 694.1 L296.9 693.6 L297.8 693.2 L298.8 692.7 L299.7 692.2 L300.6 691.7 L301.4 691.2 L302.3 690.7 L303.1 690.3 L304.0 689.8 L304.8 689.3 L305.5 688.9 L306.3 688.4 L307.0 688.0 L307.7 687.6 L308.3 687.2 L309.0 686.9 L309.6 686.5 L310.1 686.2 L310.7 685.9 L311.2 685.6 L311.6 685.4 L312.1 685.1 L311.9 684.9 L311.5 685.0 L311.0 685.1 L310.4 685.3 L309.8 685.5 L309.2 685.7 L308.5 685.9 L307.8 686.2 L307.1 686.4 L306.4 686.7 L305.6 687.0 L304.8 687.3 L303.9 687.6 L303.1 687.9 L302.2 688.3 L301.3 688.6 L300.4 689.0 L299.5 689.3 L298.5 689.6 L297.6 690.0 L296.6 690.3 L295.6 690.7 L294.7 691.0 L293.7 691.3 L292.7 691.7 L291.7 692.0 L290.7 692.3 L289.7 692.5 L288.7 692.8 L287.7 693.0 L286.8 693.3 L285.8 693.5 L284.9 693.7 L283.9 693.8 L283.0 694.0 L282.1 694.1 L281.2 694.1 L280.4 694.2 L279.6 694.2 L278.8 694.2 L278.0 694.2 L277.3 694.1 L276.5 694.0 L275.8 693.9 L275.0 693.7 L274.3 693.5 L273.5 693.3 L272.7 693.0 L271.9 692.8 L271.1 692.5 L270.3 692.1 L269.4 691.8 L268.6 691.4 L267.7 691.0 L266.9 690.6 L266.0 690.2 L265.1 689.8 L264.3 689.4 L263.4 688.9 L262.5 688.5 L261.6 688.0 L260.7 687.6 L259.8 687.1 L258.9 686.7 L257.9 686.2 L257.0 685.8 L256.1 685.4 L255.1 685.0 L254.2 684.6 L253.3 684.2 L252.3 683.9 L251.3 683.6 L250.4 683.3 L249.4 683.0 L248.4 682.7 L247.5 682.5 L246.5 682.3 L245.5 682.2 L244.5 682.1 L243.5 682.1 L242.6 682.1 L241.6 682.1 L240.6 682.2 L239.7 682.4 L238.7 682.5 L237.7 682.7 L236.8 682.9 L235.8 683.2 L234.9 683.5 L233.9 683.8 L233.0 684.1 L232.0 684.5 L231.1 684.8 L230.1 685.2 L229.2 685.6 L228.3 686.0 L227.4 686.4 L226.5 686.9 L225.6 687.3 L224.7 687.8 L223.9 688.2 L223.0 688.7 L222.2 689.1 L221.4 689.6 L220.6 690.1 L219.8 690.5 L219.0 691.0 L218.3 691.4 L217.6 691.8 L216.9 692.3 L216.2 692.7 L215.5 693.1 L214.9 693.5 L214.3 693.9 L213.7 694.2 L213.2 694.5 L212.7 694.9 L212.2 695.1 L211.8 695.4 L211.3 695.7 L210.9 695.9Z" fill="#050505"/></svg>
<div class="a" style="left:199px;top:702px;width:175px;height:1px;background:#3e3e40"></div>
<div class="a" style="left:273.5px;top:686px;width:100.5px;height:16px;background:#6f7073"></div>
<svg class="tx" style="left:271.50px;top:682.87px" width="115.3" height="19.8"><text x="5" y="14.83" font-family="Liberation Sans" font-weight="normal" font-size="12.35" fill="#f2f2f2" textLength="95.30" lengthAdjust="spacingAndGlyphs" style="white-space:pre;">Dense watercolor lin</text></svg>
<div class="a" style="left:199px;top:703px;width:175px;height:23px;background:linear-gradient(#747579,#6c6d70)"></div>
<svg style="left:0;top:0;clip-path:inset(703px 538px 40px 199px)" width="912" height="766"><defs><filter id="wb1" x="-10%" y="-50%" width="120%" height="200%"><feGaussianBlur stdDeviation=".6"/></filter></defs><path d="M211.1 720.1 L211.6 720.3 L212.1 720.4 L212.7 720.3 L213.3 720.3 L213.9 720.2 L214.6 720.0 L215.3 719.9 L216.0 719.7 L216.7 719.5 L217.4 719.3 L218.2 719.0 L219.0 718.8 L219.8 718.5 L220.6 718.3 L221.4 718.0 L222.3 717.7 L223.1 717.4 L224.0 717.1 L224.9 716.9 L225.8 716.6 L226.7 716.3 L227.5 716.0 L228.4 715.7 L229.3 715.5 L230.2 715.2 L231.1 715.0 L232.0 714.7 L232.9 714.5 L233.8 714.3 L234.7 714.1 L235.5 713.9 L236.4 713.8 L237.2 713.7 L238.0 713.6 L238.8 713.5 L239.6 713.4 L240.4 713.4 L241.1 713.4 L241.8 713.4 L242.4 713.4 L243.0 713.5 L243.7 713.6 L244.3 713.7 L245.0 713.9 L245.7 714.1 L246.4 714.3 L247.1 714.5 L247.9 714.8 L248.6 715.1 L249.4 715.4 L250.2 715.8 L251.0 716.1 L251.8 716.5 L252.7 716.9 L253.5 717.3 L254.4 717.7 L255.2 718.1 L256.1 718.6 L257.0 719.0 L257.9 719.5 L258.8 719.9 L259.8 720.3 L260.7 720.8 L261.6 721.2 L262.6 721.6 L263.6 722.0 L264.5 722.4 L265.5 722.8 L266.5 723.2 L267.5 723.5 L268.5 723.9 L269.5 724.2 L270.6 724.4 L271.6 724.7 L272.6 724.9 L273.7 725.1 L274.8 725.2 L275.8 725.3 L276.9 725.3 L278.0 725.3 L279.1 725.2 L280.1 725.1 L281.1 724.9 L282.2 724.7 L283.2 724.5 L284.3 724.2 L285.3 723.9 L286.4 723.6 L287.4 723.3 L288.4 722.9 L289.5 722.5 L290.5 722.1 L291.5 721.7 L292.5 721.2 L293.5 720.8 L294.5 720.3 L295.5 719.8 L296.4 719.3 L297.4 718.8 L298.3 718.3 L299.3 717.8 L300.2 717.3 L301.1 716.8 L301.9 716.3 L302.8 715.8 L303.6 715.3 L304.4 714.8 L305.2 714.3 L306.0 713.8 L306.7 713.3 L307.4 712.9 L308.1 712.4 L308.7 712.0 L309.3 711.6 L309.9 711.1 L310.4 710.7 L310.9 710.4 L311.3 710.0 L311.7 709.6 L312.1 709.1 L311.9 708.9 L311.4 708.7 L310.8 708.7 L310.2 708.8 L309.6 708.9 L308.9 709.0 L308.2 709.2 L307.5 709.4 L306.7 709.6 L306.0 709.8 L305.1 710.1 L304.3 710.4 L303.5 710.6 L302.6 710.9 L301.7 711.2 L300.8 711.5 L299.9 711.9 L299.0 712.2 L298.0 712.5 L297.1 712.8 L296.1 713.2 L295.1 713.5 L294.1 713.8 L293.2 714.1 L292.2 714.4 L291.2 714.7 L290.2 715.0 L289.3 715.2 L288.3 715.5 L287.3 715.7 L286.4 715.9 L285.4 716.1 L284.5 716.3 L283.6 716.4 L282.7 716.5 L281.9 716.6 L281.0 716.7 L280.2 716.8 L279.4 716.8 L278.7 716.8 L278.0 716.7 L277.3 716.7 L276.7 716.6 L276.0 716.4 L275.3 716.3 L274.6 716.1 L273.8 715.9 L273.1 715.6 L272.3 715.4 L271.6 715.1 L270.8 714.8 L270.0 714.4 L269.2 714.1 L268.3 713.7 L267.5 713.3 L266.6 712.9 L265.8 712.4 L264.9 712.0 L264.0 711.6 L263.2 711.1 L262.3 710.7 L261.4 710.2 L260.4 709.8 L259.5 709.3 L258.6 708.9 L257.7 708.5 L256.7 708.0 L255.8 707.6 L254.8 707.2 L253.8 706.8 L252.8 706.5 L251.9 706.1 L250.9 705.8 L249.9 705.5 L248.8 705.3 L247.8 705.0 L246.8 704.9 L245.7 704.7 L244.7 704.6 L243.6 704.6 L242.6 704.6 L241.5 704.6 L240.5 704.7 L239.5 704.8 L238.5 705.0 L237.5 705.2 L236.5 705.5 L235.5 705.7 L234.5 706.0 L233.5 706.3 L232.5 706.7 L231.6 707.0 L230.6 707.4 L229.7 707.8 L228.7 708.2 L227.8 708.6 L226.9 709.1 L225.9 709.5 L225.1 710.0 L224.2 710.5 L223.3 710.9 L222.5 711.4 L221.6 711.9 L220.8 712.4 L220.0 712.9 L219.2 713.3 L218.5 713.8 L217.7 714.3 L217.0 714.8 L216.4 715.2 L215.7 715.7 L215.1 716.1 L214.5 716.6 L213.9 717.0 L213.4 717.4 L212.9 717.8 L212.4 718.2 L212.0 718.6 L211.6 719.0 L211.2 719.4 L210.9 719.9Z" fill="#141414" filter="url(#wb1)"/></svg>
<div class="a" style="left:199px;top:726px;width:175px;height:1px;background:#3e3e40"></div>
<svg class="tx" style="left:327.50px;top:706.87px" width="59.3" height="19.8"><text x="5" y="14.83" font-family="Liberation Sans" font-weight="normal" font-size="12.35" fill="#f2f2f2" textLength="39.31" lengthAdjust="spacingAndGlyphs" style="white-space:pre;">BlendSq</text></svg>
<div class="a" style="left:199px;top:727px;width:175px;height:14px;background:linear-gradient(#747579,#6c6d70)"></div>
<svg style="left:0;top:0;clip-path:inset(727px 538px 25px 199px)" width="912" height="766"><defs><filter id="wb1" x="-10%" y="-50%" width="120%" height="200%"><feGaussianBlur stdDeviation=".6"/></filter></defs><path d="M211.1 744.1 L211.5 744.0 L211.9 743.9 L212.4 743.7 L213.0 743.5 L213.5 743.3 L214.1 743.1 L214.8 742.8 L215.4 742.6 L216.1 742.3 L216.8 742.0 L217.6 741.8 L218.3 741.5 L219.1 741.1 L219.9 740.8 L220.7 740.5 L221.6 740.2 L222.4 739.9 L223.3 739.6 L224.2 739.2 L225.0 738.9 L225.9 738.6 L226.8 738.3 L227.7 738.0 L228.7 737.7 L229.6 737.4 L230.5 737.1 L231.4 736.9 L232.3 736.6 L233.2 736.4 L234.1 736.2 L235.0 736.0 L235.9 735.9 L236.8 735.7 L237.7 735.6 L238.5 735.5 L239.3 735.4 L240.2 735.4 L240.9 735.4 L241.7 735.4 L242.5 735.4 L243.2 735.5 L243.9 735.6 L244.6 735.8 L245.4 735.9 L246.2 736.1 L246.9 736.4 L247.7 736.6 L248.5 736.9 L249.3 737.2 L250.1 737.5 L251.0 737.9 L251.8 738.3 L252.6 738.7 L253.5 739.1 L254.4 739.5 L255.2 739.9 L256.1 740.3 L257.0 740.8 L257.9 741.2 L258.8 741.7 L259.7 742.1 L260.6 742.5 L261.6 743.0 L262.5 743.4 L263.4 743.8 L264.4 744.2 L265.3 744.6 L266.3 745.0 L267.2 745.4 L268.2 745.7 L269.2 746.0 L270.1 746.3 L271.1 746.6 L272.1 746.8 L273.1 747.0 L274.0 747.1 L275.0 747.3 L276.0 747.3 L277.0 747.4 L278.0 747.3 L279.0 747.3 L280.0 747.2 L280.9 747.0 L281.9 746.8 L282.9 746.6 L283.9 746.4 L284.9 746.1 L285.9 745.8 L286.9 745.5 L287.9 745.1 L288.9 744.8 L289.9 744.4 L290.9 744.0 L291.9 743.6 L292.9 743.1 L293.9 742.7 L294.8 742.2 L295.8 741.8 L296.7 741.3 L297.7 740.8 L298.6 740.4 L299.5 739.9 L300.4 739.4 L301.3 738.9 L302.2 738.5 L303.0 738.0 L303.8 737.5 L304.6 737.1 L305.4 736.7 L306.2 736.2 L306.9 735.8 L307.6 735.4 L308.3 735.1 L308.9 734.7 L309.5 734.4 L310.1 734.1 L310.6 733.8 L311.1 733.5 L311.6 733.3 L312.1 733.1 L311.9 732.9 L311.5 733.0 L311.0 733.2 L310.5 733.4 L309.9 733.6 L309.3 733.8 L308.6 734.0 L307.9 734.3 L307.2 734.6 L306.5 734.9 L305.7 735.2 L304.9 735.5 L304.1 735.9 L303.2 736.2 L302.3 736.5 L301.4 736.9 L300.5 737.2 L299.6 737.6 L298.7 738.0 L297.7 738.3 L296.8 738.7 L295.8 739.0 L294.8 739.4 L293.8 739.7 L292.8 740.0 L291.8 740.3 L290.8 740.6 L289.8 740.9 L288.9 741.2 L287.9 741.5 L286.9 741.7 L285.9 741.9 L285.0 742.1 L284.0 742.3 L283.1 742.4 L282.2 742.5 L281.3 742.6 L280.4 742.7 L279.6 742.7 L278.8 742.7 L278.0 742.7 L277.2 742.6 L276.5 742.5 L275.7 742.4 L274.9 742.2 L274.2 742.0 L273.4 741.8 L272.6 741.5 L271.7 741.2 L270.9 740.9 L270.1 740.6 L269.2 740.2 L268.4 739.9 L267.5 739.5 L266.7 739.1 L265.8 738.7 L264.9 738.2 L264.1 737.8 L263.2 737.4 L262.3 736.9 L261.4 736.5 L260.5 736.0 L259.6 735.6 L258.6 735.1 L257.7 734.7 L256.8 734.3 L255.9 733.9 L254.9 733.5 L254.0 733.1 L253.1 732.7 L252.1 732.4 L251.2 732.0 L250.2 731.7 L249.3 731.5 L248.3 731.2 L247.4 731.0 L246.4 730.8 L245.4 730.7 L244.5 730.6 L243.5 730.6 L242.5 730.6 L241.6 730.6 L240.6 730.7 L239.7 730.8 L238.8 731.0 L237.8 731.2 L236.9 731.4 L235.9 731.7 L235.0 731.9 L234.0 732.2 L233.1 732.6 L232.1 732.9 L231.2 733.3 L230.3 733.6 L229.4 734.0 L228.5 734.4 L227.5 734.8 L226.6 735.3 L225.8 735.7 L224.9 736.1 L224.0 736.6 L223.2 737.0 L222.3 737.5 L221.5 737.9 L220.7 738.4 L219.9 738.8 L219.2 739.3 L218.4 739.7 L217.7 740.1 L217.0 740.5 L216.3 740.9 L215.6 741.3 L215.0 741.7 L214.4 742.0 L213.8 742.4 L213.3 742.7 L212.7 743.0 L212.2 743.2 L211.8 743.5 L211.3 743.7 L210.9 743.9Z" fill="#0c0c0c"/></svg>
<div class="a" style="left:340px;top:734px;width:34px;height:7px;overflow:hidden"><svg class="tx" style="left:4.00px;top:-3.13px" width="42.8" height="19.8"><text x="5" y="14.83" font-family="Liberation Sans" font-weight="normal" font-size="12.35" fill="#e0e0e0" textLength="22.79" lengthAdjust="spacingAndGlyphs" style="white-space:pre;">Pin 2</text></svg></div>
<div class="a" style="left:376px;top:583px;width:11px;height:158px;background:#5c5c5e;border-left:1px solid #444"></div>
<div class="a" style="left:377px;top:595px;width:9px;height:96px;background:linear-gradient(90deg,#7a7a7c,#6a6a6c);border:1px solid #4a4a4c;border-radius:2px"></div>
<div class="a" style="left:377px;top:583px;width:9px;height:12px;background:#76777a;border:1px solid #4a4a4c"></div>
<svg style="left:378px;top:586px;" width="7" height="5" viewBox="0 0 7 5"><path d="M0 4.5L3.5 0.5L7 4.5Z" fill="#333"/></svg>
<div class="a" style="left:377px;top:729px;width:9px;height:12px;background:#76777a;border:1px solid #4a4a4c"></div>
<svg style="left:378px;top:733px;" width="7" height="5" viewBox="0 0 7 5"><path d="M0 0.5H7L3.5 4.5Z" fill="#333"/></svg>
<svg style="left:378px;top:640px;" width="7" height="9" viewBox="0 0 7 9"><path d="M0.5 1H6.5M0.5 4.5H6.5M0.5 8H6.5" stroke="#444"/></svg>
<div class="a" style="left:387px;top:583px;width:5px;height:179px;background:#5a5a5b;border-left:1px solid #444"></div>
<svg style="left:351px;top:744px;" width="15" height="17" viewBox="0 0 15 17"><path d="M1 0.8H12.2Q13 0.8 13 1.6V11L9.5 14.8H1.6Q0.8 14.8 0.8 14V1.6Q0.8 0.8 1.6 0.8Z" fill="#f2f8fb" stroke="#111" stroke-width="1.4"/><path d="M13 11L9.5 14.8V11.5Q9.5 11 10 11Z" fill="#eee" stroke="#111" stroke-width="1"/></svg>
<svg style="left:370px;top:743px;" width="15" height="17" viewBox="0 0 15 17"><path d="M1.5 4.5H12.5L11 15.5H3Z" fill="#f4f4f4" stroke="#111" stroke-width="1.2"/><path d="M1 4.5Q1 1 7 1Q13 1 13 4.5" fill="#ddd" stroke="#111" stroke-width="1.2"/><path d="M3.5 4Q7 1.5 10.5 4" fill="none" stroke="#111" stroke-width="1.3"/><path d="M4.8 6.5V14M7 6.5V14M9.2 6.5V14" stroke="#999" stroke-width=".9"/></svg>
<div class="a" style="left:393px;top:48px;width:501px;height:714px;background:#444"></div>
<div class="a" style="left:393px;top:48px;width:500px;height:25px;background:#6e6f71;border-top:1px solid #8a8a8c;border-bottom:1px solid #4a4a4a"></div>
<svg style="left:396px;top:52px;" width="17" height="19" viewBox="0 0 17 19"><defs><linearGradient id="pg" x1="0" y1="0" x2=".6" y2=".6"><stop offset="0" stop-color="#cfe6f2"/><stop offset="1" stop-color="#fff"/></linearGradient></defs><path d="M3.2 3.3H9.5L15.6 9V18.1H3.2Z" fill="url(#pg)" stroke="#111" stroke-width="1.4" stroke-linejoin="round"/><path d="M9.5 3.3V9H15.6" fill="#eee" stroke="#111" stroke-width="1.3"/><path d="M3 0V6M0 3H6M1 1L5 5M5 1L1 5" stroke="#111" stroke-width="1"/></svg>
<svg style="left:420px;top:53px;" width="19" height="17" viewBox="0 0 19 17"><path d="M0.8 3.6H7.5L8.5 5.5H14V15.8H0.8Z" fill="#fafafa" stroke="#111" stroke-width="1.2"/><path d="M2.3 6.8H17.5L14.5 16.3H0.6Z" fill="#c4c4c4" stroke="#111" stroke-width="1.3" stroke-linejoin="round"/><path d="M10 4.5Q12.5 1 16 2.5" fill="none" stroke="#111" stroke-width="1.8"/><path d="M15 0.3L18.5 3L14.5 4.8Z" fill="#111"/></svg>
<svg style="left:444px;top:52px;" width="18" height="18" viewBox="0 0 18 18"><defs><linearGradient id="sg" x1="0" y1="0" x2="0" y2="1"><stop offset="0" stop-color="#d8ecf4"/><stop offset="1" stop-color="#fff"/></linearGradient><linearGradient id="sg2" x1="0" y1="0" x2="1" y2="0"><stop offset="0" stop-color="#555"/><stop offset=".6" stop-color="#ccc"/><stop offset="1" stop-color="#444"/></linearGradient></defs><rect x="0" y="0" width="18" height="18" rx="1" fill="#151515"/><rect x="3.3" y="1.5" width="11.7" height="12" fill="url(#sg)"/><rect x="3" y="14.8" width="12" height="2" fill="url(#sg2)"/></svg>
<svg style="left:469px;top:53px;" width="18" height="18" viewBox="0 0 18 18"><defs><linearGradient id="bg3" x1="0" y1="0" x2="0" y2="1"><stop offset="0" stop-color="#b8def0"/><stop offset=".5" stop-color="#fff"/></linearGradient></defs><rect x="0.5" y="0.5" width="12" height="12" fill="#1e6fe0" stroke="#222"/><rect x="2.2" y="1.8" width="8.6" height="7.5" fill="url(#bg3)"/><rect x="2" y="10" width="2" height="1.5" fill="#ddd"/><path d="M8 7L17.5 15L14 15.2L16 18.5L14.5 19.2L12.5 15.8L10 18.2Z" fill="#111" stroke="#333" stroke-width=".5"/></svg>
<svg style="left:493px;top:53px;" width="18" height="18" viewBox="0 0 18 18"><defs><linearGradient id="bg3" x1="0" y1="0" x2="0" y2="1"><stop offset="0" stop-color="#b8def0"/><stop offset=".5" stop-color="#fff"/></linearGradient></defs><rect x="0.5" y="0.5" width="12" height="12" fill="#1e6fe0" stroke="#222"/><rect x="2.2" y="1.8" width="8.6" height="7.5" fill="url(#bg3)"/><rect x="2" y="10" width="2" height="1.5" fill="#ddd"/><path d="M8 7L17.5 15L14 15.2L16 18.5L14.5 19.2L12.5 15.8L10 18.2Z" fill="#111" stroke="#333" stroke-width=".5"/></svg>
<svg style="left:517px;top:53px;" width="18" height="18" viewBox="0 0 18 18"><defs><linearGradient id="bg3" x1="0" y1="0" x2="0" y2="1"><stop offset="0" stop-color="#b8def0"/><stop offset=".5" stop-color="#fff"/></linearGradient></defs><rect x="0.5" y="0.5" width="12" height="12" fill="#1e6fe0" stroke="#222"/><rect x="2.2" y="1.8" width="8.6" height="7.5" fill="url(#bg3)"/><rect x="2" y="10" width="2" height="1.5" fill="#ddd"/><path d="M8 7L17.5 15L14 15.2L16 18.5L14.5 19.2L12.5 15.8L10 18.2Z" fill="#111" stroke="#333" stroke-width=".5"/></svg>
<div class="a" style="left:542px;top:51px;width:1px;height:19px;background:#555;box-shadow:1px 0 0 #888"></div>
<svg style="left:547px;top:53px;" width="20" height="16" viewBox="0 0 20 16"><path d="M5 2.6H14" stroke="#333" stroke-width="2.6" stroke-dasharray="2 1.2"/><path d="M13.5 2.6Q18.8 2.6 18.8 6.5Q18.8 10.5 14 10.5H6" fill="none" stroke="#333" stroke-width="2.8"/><path d="M1 10.5L6.8 6V15Z" fill="#333"/></svg>
<svg style="left:571px;top:53px;" width="20" height="16" viewBox="0 0 20 16"><path d="M14 5.3H6Q1 5.3 1 9.2Q1 13 6 13" fill="none" stroke="#333" stroke-width="2.8"/><path d="M6 13H15.5" stroke="#333" stroke-width="2.6" stroke-dasharray="2 1.2"/><path d="M19.2 5.3L13.5 0.8V9.8Z" fill="#333"/></svg>
<div class="a" style="left:597px;top:51px;width:1px;height:19px;background:#555;box-shadow:1px 0 0 #888"></div>
<svg style="left:604px;top:52px;" width="18" height="18" viewBox="0 0 18 18"><g fill="#333"><ellipse cx="9" cy="2.5" rx="1.8" ry="2.2"/><ellipse cx="15" cy="6" rx="2" ry="1.8"/><ellipse cx="15" cy="12.2" rx="2" ry="1.8"/><ellipse cx="9" cy="15.5" rx="1.8" ry="2.2"/><ellipse cx="2.8" cy="12.2" rx="2" ry="1.8"/><ellipse cx="2.8" cy="6" rx="2" ry="1.8"/></g></svg>
<svg style="left:628px;top:52px;" width="18" height="18" viewBox="0 0 18 18"><rect x="0" y="0" width="18" height="18" fill="#7a7a7c"/><g fill="#8e8e90"><rect x="6" y="0.5" width="6" height="3"/><rect x="6" y="14.5" width="6" height="3"/><rect x="0.5" y="6" width="3" height="6"/><rect x="14.5" y="6" width="3" height="6"/></g><rect x="3.5" y="3.5" width="11" height="11" rx="1.5" fill="#9a9a9c" stroke="#666" stroke-dasharray="1 1"/></svg>
<svg style="left:652px;top:52px;" width="19" height="17" viewBox="0 0 19 17"><path d="M7.5 6L17 8.5L14 16L4.5 13Z" fill="#f4f4f4" stroke="#111" stroke-width="1.1" stroke-linejoin="round"/><path d="M7 6Q2 7 0.3 12.5Q0.5 14 1.5 13Q3 10 6 9Z" fill="#111"/><path d="M8.5 7.5L14 0.8" stroke="#111" stroke-width="2.2"/><path d="M11.5 3L16.5 0.5L14.5 5" fill="none" stroke="#111" stroke-width="1.5"/><path d="M12 3.2L14.5 1.2" stroke="#ddd" stroke-width=".8"/></svg>
<svg style="left:676px;top:52px;" width="18" height="18" viewBox="0 0 18 18"><path d="M4.5 4.5Q9 7.5 13.5 4.5Q10.5 9 13.5 13.5Q9 10.5 4.5 13.5Q7.5 9 4.5 4.5Z" fill="none" stroke="#333" stroke-width="2.6" stroke-linejoin="round"/><g fill="#333"><path d="M0 0H6L0 6Z"/><path d="M18 0H12L18 6Z"/><path d="M0 18H6L0 12Z"/><path d="M18 18H12L18 12Z"/></g></svg>
<div class="a" style="left:702px;top:51px;width:1px;height:19px;background:#555;box-shadow:1px 0 0 #888"></div>
<svg style="left:709px;top:53px;" width="18" height="17" viewBox="0 0 18 17"><rect x="2" y="3" width="14" height="12" fill="none" stroke="#555" stroke-dasharray="1.5 1.5"/><path d="M0 17L18 0" stroke="#5a5a5a" stroke-width="1.6"/></svg>
<svg style="left:733px;top:53px;" width="17" height="17" viewBox="0 0 17 17"><path d="M0.5 0.5H16.5L0.5 16.5Z" fill="none" stroke="#5e5e5e" stroke-dasharray="1.5 1.5"/><path d="M16.5 0.5V16.5H0.5Z" fill="#5e5e5e"/></svg>
<svg style="left:758px;top:54px;" width="15" height="15" viewBox="0 0 15 15"><rect x="0.5" y="0.5" width="14" height="14" fill="none" stroke="#555" stroke-dasharray="2 1"/><rect x="3" y="3" width="9" height="9" fill="#9a9a9a"/></svg>
<div class="a" style="left:782px;top:51px;width:1px;height:19px;background:#555;box-shadow:1px 0 0 #888"></div>
<div class="a" style="left:786px;top:50px;width:22px;height:22px;background:#606163;border:1px solid #555;border-radius:3px;box-shadow:inset 1px 1px 0 #6a6a6a"></div>
<div class="a" style="left:810px;top:50px;width:22px;height:22px;background:#606163;border:1px solid #555;border-radius:3px;box-shadow:inset 1px 1px 0 #6a6a6a"></div>
<div class="a" style="left:834px;top:50px;width:22px;height:22px;background:#606163;border:1px solid #555;border-radius:3px;box-shadow:inset 1px 1px 0 #6a6a6a"></div>
<svg style="left:788px;top:52px;" width="18" height="18" viewBox="0 0 18 18"><path d="M1 4L14 15H1V4Z" fill="none" stroke="#1a1a1a" stroke-width="1.4"/><path d="M1 9V16H9" fill="none" stroke="#1e90ff" stroke-width="2"/><path d="M13 0H16V14L14.5 17L13 14Z" fill="#fff" stroke="#111" stroke-width="1.2"/></svg>
<svg style="left:812px;top:52px;" width="18" height="18" viewBox="0 0 18 18"><path d="M1 15Q1 8 10 8V15Z" fill="none" stroke="#1a1a1a" stroke-width="1.4"/><path d="M2 16H9M15 11V16H11" fill="none" stroke="#1e90ff" stroke-width="2"/><path d="M11 0H14V13L12.5 16L11 13Z" fill="#fff" stroke="#111" stroke-width="1.2"/></svg>
<svg style="left:836px;top:52px;" width="18" height="18" viewBox="0 0 18 18"><path d="M0 6H18M0 13H18M4 1V18M13 1V18" stroke="#1e90ff" stroke-width="1.8"/><path d="M7 0H11V13L9 16L7 13Z" fill="#fff" stroke="#111" stroke-width="1.3"/></svg>
<div class="a" style="left:882px;top:49px;width:11px;height:23px;background:linear-gradient(90deg,#7a7a7c,#6a6a6c);border:1px solid #555;border-radius:3px"></div>
<svg style="left:884px;top:59px;" width="7" height="4" viewBox="0 0 7 4"><path d="M0 0H7L3.5 4Z" fill="#222"/></svg>
<div class="a" style="left:393px;top:73px;width:500px;height:22px;background:#4a4a4a;border-bottom:1px solid #2e2e2e"></div>
<div class="a" style="left:393px;top:75px;width:98px;height:19px;background:#575758;border:1px solid #6e8a9a"></div>
<svg class="tx" style="left:392.80px;top:75.42px" width="78.3" height="17.4"><text x="5" y="13.08" font-family="Liberation Sans" font-weight="normal" font-size="10.90" fill="#9a9a9a" textLength="58.31" lengthAdjust="spacingAndGlyphs" style="white-space:pre;">New canvas*</text></svg>
<div class="a" style="left:481px;top:82px;width:6px;height:6px;background:#3a3a3a;border-radius:50%"></div>
<div class="a" style="left:492px;top:75px;width:100px;height:19px;background:linear-gradient(#858587,#6e6f71);border-top:1px solid #999"></div>
<svg class="tx" style="left:492.80px;top:75.42px" width="78.3" height="17.4"><text x="5" y="13.08" font-family="Liberation Sans" font-weight="normal" font-size="10.90" fill="#f0f0f0" textLength="58.31" lengthAdjust="spacingAndGlyphs" style="white-space:pre;">New canvas*</text></svg>
<div class="a" style="left:580px;top:82px;width:6px;height:6px;background:#3a3a3a;border-radius:50%"></div>
<div class="a" style="left:882px;top:75px;width:11px;height:19px;background:linear-gradient(90deg,#7a7a7c,#6a6a6c);border:1px solid #555;border-radius:3px"></div>
<svg style="left:884px;top:83px;" width="7" height="4" viewBox="0 0 7 4"><path d="M0 0H7L3.5 4Z" fill="#222"/></svg>
<div class="a" style="left:393px;top:94px;width:501px;height:646px;background:#3f3f3f;border-top:2px solid #2a2a2a;border-left:1px solid #606165"></div>
<div class="a" style="left:394px;top:96px;width:1px;height:644px;background:#2a2a2a"></div>
<div class="a" style="left:424px;top:107px;width:439px;height:620px;background:#fff;box-shadow:1px 1px 0 #7a7a7a"></div>
<svg style="left:0;top:0" width="912" height="766"><g><path d="M542.20 121.80 L540.91 141.80 L541.20 536.50 L546.00 536.50 L545.71 141.80 L544.40 121.80Z" fill="#4a3424"/><circle cx="543.6" cy="536.5" r="2.4" fill="#4a3424"/><path d="M546.71 162.73 L701.81 289.93 L704.99 286.07 L549.89 158.87Z" fill="#4a3424"/><circle cx="548.3" cy="160.8" r="2.5" fill="#4a3424"/><circle cx="703.4" cy="288" r="2.5" fill="#4a3424"/><path d="M602.65 159.36 L581.59 189.35 L554.57 231.47 L555.23 231.93 L585.68 192.22 L606.75 162.24Z" fill="#4a3424"/><circle cx="604.7" cy="160.8" r="2.5" fill="#4a3424"/><path d="M653.10 226.00 L653.19 337.00 L654.35 352.00 L656.85 352.00 L657.99 337.00 L657.90 226.00Z" fill="#4a3424"/><circle cx="655.5" cy="226" r="2.4" fill="#4a3424"/><path d="M669.55 220.94 L619.35 260.43 L603.23 275.53 L603.97 276.47 L622.44 264.36 L672.65 224.86Z" fill="#4a3424"/><circle cx="671.1" cy="222.9" r="2.5" fill="#4a3424"/><path d="M722.67 210.68 L688.76 231.96 L594.58 296.94 L597.42 301.06 L691.60 236.07 L723.53 211.92Z" fill="#4a3424"/><circle cx="596" cy="299" r="2.5" fill="#4a3424"/><path d="M672.33 237.78 L639.83 261.46 L620.51 277.39 L621.69 279.01 L642.78 265.50 L675.27 241.82Z" fill="#4a3424"/><circle cx="673.8" cy="239.8" r="2.5" fill="#4a3424"/><path d="M668.56 243.89 L651.68 254.69 L634.00 267.63 L614.56 283.39 L615.44 284.61 L636.36 270.85 L654.04 257.92 L669.44 245.11Z" fill="#4a3424"/><path d="M705.42 244.25 L629.51 289.53 L621.43 295.51 L622.97 298.09 L632.07 293.82 L707.98 248.55Z" fill="#4a3424"/><circle cx="706.7" cy="246.4" r="2.5" fill="#4a3424"/><path d="M592.16 266.89 L615.81 281.95 L697.18 327.48 L699.62 323.12 L618.26 277.59 L593.04 265.31Z" fill="#4a3424"/><circle cx="698.4" cy="325.3" r="2.5" fill="#4a3424"/><path d="M705.50 286.59 L704.90 482.79 L709.70 482.81 L710.30 286.61Z" fill="#4a3424"/><circle cx="707.9" cy="286.6" r="2.4" fill="#4a3424"/><circle cx="707.3" cy="482.8" r="2.4" fill="#4a3424"/><path d="M740.08 292.48 L648.91 328.72 L641.85 332.61 L642.95 335.39 L650.76 333.37 L741.92 297.12Z" fill="#4a3424"/><circle cx="741" cy="294.8" r="2.5" fill="#4a3424"/><path d="M525.59 296.68 L539.27 302.97 L671.92 349.60 L673.68 344.60 L541.03 297.97 L526.41 294.32Z" fill="#4a3424"/><circle cx="672.8" cy="347.1" r="2.65" fill="#4a3424"/><path d="M546.08 309.95 L564.48 317.95 L676.85 356.21 L678.55 351.19 L566.19 312.94 L546.72 308.05Z" fill="#4a3424"/><circle cx="677.7" cy="353.7" r="2.65" fill="#4a3424"/><path d="M534.65 331.51 L657.85 364.81 L659.15 359.99 L535.95 326.69Z" fill="#4a3424"/><circle cx="535.3" cy="329.1" r="2.5" fill="#4a3424"/><circle cx="658.5" cy="362.4" r="2.5" fill="#4a3424"/><path d="M487.54 337.42 L501.93 341.82 L572.27 357.04 L573.33 352.16 L502.99 336.93 L488.06 334.98Z" fill="#4a3424"/><circle cx="572.8" cy="354.6" r="2.5" fill="#4a3424"/><path d="M553.10 391.58 L568.10 390.01 L688.81 365.05 L687.79 360.15 L567.08 385.11 L552.70 389.62Z" fill="#4a3424"/><circle cx="688.3" cy="362.6" r="2.5" fill="#4a3424"/><path d="M558.22 398.49 L712.29 409.51 L737.29 410.30 L737.51 407.30 L712.64 404.52 L558.58 393.51Z" fill="#4a3424"/><circle cx="558.4" cy="396" r="2.5" fill="#4a3424"/><path d="M584.21 420.70 L752.01 420.00 L751.99 415.20 L584.19 415.90Z" fill="#4a3424"/><circle cx="584.2" cy="418.3" r="2.4" fill="#4a3424"/><circle cx="752" cy="417.6" r="2.4" fill="#4a3424"/><path d="M544.91 500.52 L718.11 456.72 L716.89 451.88 L543.69 495.68Z" fill="#4a3424"/><circle cx="544.3" cy="498.1" r="2.5" fill="#4a3424"/><circle cx="717.5" cy="454.3" r="2.5" fill="#4a3424"/></g></svg>
<svg style="left:0;top:0" width="912" height="766"><defs><clipPath id="cv"><path clip-rule="evenodd" d="M396 96H893V739H396Z M424 107V727H863V107Z"/></clipPath><clipPath id="pp"><rect x="424" y="107" width="439" height="620"/></clipPath></defs><g clip-path="url(#cv)" shape-rendering="crispEdges"><path d="M425.00 417.40L893.00 182.65 M425.00 417.40L893.00 652.15 M862.00 417.40L396.00 183.65 M862.00 417.40L396.00 651.15" stroke="#6a2aa8" stroke-width="1" fill="none"/><path d="M643.5 96V739" stroke="#6a2aa8" stroke-width="1"/><path d="M396 417.4H893" stroke="#2a2a90" stroke-width="1"/></g><g clip-path="url(#pp)" shape-rendering="crispEdges"><g opacity=".6"><path d="M425.00 417.40L893.00 182.65 M425.00 417.40L893.00 652.15 M862.00 417.40L396.00 183.65 M862.00 417.40L396.00 651.15" stroke="#a34dff" stroke-width="1" fill="none"/><path d="M643.5 96V739" stroke="#a34dff" stroke-width="1"/><path d="M396 417.4H893" stroke="#4040ff" stroke-width="1"/></g><path d="M425 410V424" stroke="#c890ff" stroke-width="1.5"/><path d="M862 410V424" stroke="#c890ff" stroke-width="1.5"/></g></svg>
<div class="a" style="left:393px;top:739px;width:501px;height:23px;background:#555;border-top:1px solid #7a7a7a"></div>
<div class="a" style="left:395px;top:740px;width:478px;height:17px;background:#484848;border:1px solid #3a3a3a"></div>
<div class="a" style="left:395px;top:741px;width:15px;height:15px;background:#565657"></div>
<svg style="left:397px;top:743px;" width="12" height="11" viewBox="0 0 12 11"><path d="M1 2L5 5.5L1 9Z" fill="#7a7a7a"/><rect x="6" y="2" width="5" height="1.5" fill="#7a7a7a"/><rect x="6" y="4.8" width="5" height="1.5" fill="#7a7a7a"/><rect x="6" y="7.6" width="5" height="1.5" fill="#7a7a7a"/></svg>
<div class="a" style="left:413px;top:742px;width:93px;height:14px;background:#5e5e60;border-top:1px solid #6e6e70;border-left:1px solid #6a6a6a;border-right:1px solid #555"></div>
<svg style="left:421px;top:744px;" width="13" height="13" viewBox="0 0 13 13"><path d="M4 0H9V4L13 12H0L4 4Z" fill="#777" stroke="#555"/></svg>
<svg class="tx" style="left:434.10px;top:742.92px" width="81.9" height="16.5"><text x="5" y="12.38" font-family="Liberation Sans" font-weight="normal" font-size="10.32" fill="#8a8a8c" textLength="61.88" lengthAdjust="spacingAndGlyphs" style="white-space:pre;">Animation cels</text></svg>
<div class="a" style="left:506px;top:742px;width:65px;height:15px;background:#6d6e70;border-top:1px solid #838385;border-left:1px solid #838385;border-right:1px solid #555"></div>
<svg style="left:511px;top:743px;" width="16" height="13" viewBox="0 0 16 13"><rect x="0.5" y="0.5" width="15" height="12" fill="#f4f4f4" stroke="#111"/><path d="M3 1V12M6 1V12M9 1V12" stroke="#555"/><path d="M3 1V12" stroke="#c04040"/><path d="M12.5 3L11 5H14ZM12.5 10L11 8H14Z" fill="#1a5aaa"/></svg>
<svg class="tx" style="left:526.80px;top:742.92px" width="55.6" height="16.5"><text x="5" y="12.38" font-family="Liberation Sans" font-weight="normal" font-size="10.32" fill="#e8e8e8" textLength="35.62" lengthAdjust="spacingAndGlyphs" style="white-space:pre;">Timeline</text></svg>
<div class="a" style="left:873px;top:740px;width:20px;height:22px;background:linear-gradient(#5e5e5e,#4e4e4e);border:1px solid #3a3a3a"></div>
<svg style="left:876px;top:751px;" width="14" height="6" viewBox="0 0 14 6"><path d="M0 6L7 0L14 6H11L7 2.5L3 6Z" fill="#888"/></svg>
<div class="a" style="left:393px;top:757px;width:501px;height:5px;background:#6a6b6d"></div>
<div class="a" style="left:893px;top:48px;width:15px;height:714px;background:linear-gradient(90deg,#333 0,#333 1px,#4a4a4a 1px,#4a4a4a 2px,#555 2px,#6c6c6c 14px,#3a3a3a 14px)"></div>
<div class="a" style="left:894px;top:48px;width:14px;height:20px;background:#555556;border-top:1px solid #6e6e6e;border-bottom:1px solid #3a3a3a"></div>
<svg style="left:896px;top:51px;" width="11" height="14" viewBox="0 0 11 14"><path d="M10 0L5 6.8L10 13.6L8.7 6.8Z M5.7 0L0 6.8L5.7 13.6L4.4 6.8Z" fill="#8e8e8e"/></svg>
</body></html>
